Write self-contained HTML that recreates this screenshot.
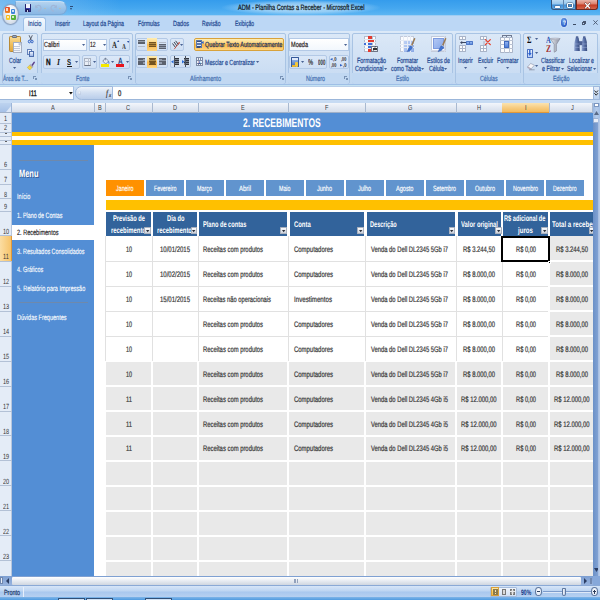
<!DOCTYPE html>
<html><head><meta charset="utf-8"><title>Excel</title>
<style>
html,body{margin:0;padding:0;}
body{width:600px;height:600px;overflow:hidden;position:relative;background:#fff;font-family:"Liberation Sans",sans-serif;}
#r{position:absolute;left:0;top:0;width:600px;height:600px;overflow:hidden;}
#r div{position:absolute;box-sizing:border-box;}
#r svg{position:absolute;overflow:visible;}
.t{position:absolute;white-space:nowrap;transform-origin:0 0;font-family:"Liberation Sans",sans-serif;text-rendering:geometricPrecision;}
</style></head><body><div id="r">
<div style="left:0px;top:0px;width:600px;height:15px;background:linear-gradient(#359cec,#45a7ef 55%,#5cb5f3);"></div>
<div style="left:0px;top:0px;width:120px;height:15px;background:linear-gradient(90deg,rgba(170,210,245,.55),rgba(170,210,245,0));"></div>
<div style="left:0px;top:14.8px;width:600px;height:16.5px;background:#bcd7f5;"></div>
<div style="left:0px;top:14.6px;width:600px;height:0.8px;background:#9fcdf3;"></div>
<div style="left:15px;top:1.2px;width:51.5px;height:13.6px;background:linear-gradient(#b4d3ef,#96c0e8 60%,#8ab7e4);border-radius:0 7px 7px 0;border:1px solid #7aa9d8;border-top-color:#c8e0f5;"></div>
<div style="left:2.3px;top:3.5px;width:16.4px;height:21.5px;background:radial-gradient(ellipse at 50% 30%,#ffffff,#e6ebf2 50%,#b4c2d6 100%);border-radius:50%;border:1px solid #8fa5c3;box-shadow:0 0 1px #6b86ad;"></div>
<div style="left:4.8px;top:6.5px;width:5px;height:6.5px;background:linear-gradient(#e8442a,#f08a1e);border-radius:1px;"></div>
<div style="left:6px;top:8.3px;width:2.3px;height:2.5px;background:#f6d7c0;"></div>
<div style="left:10.8px;top:9px;width:4.3px;height:5px;background:#3f86d8;border-radius:1px;"></div>
<div style="left:11.8px;top:10.3px;width:2px;height:2px;background:#cfe2f6;"></div>
<div style="left:5.6px;top:14.5px;width:4.8px;height:5.8px;background:linear-gradient(#f6b31c,#f7d233);border-radius:1px;"></div>
<div style="left:6.8px;top:16px;width:2.2px;height:2.4px;background:#fbeeb8;"></div>
<div style="left:11px;top:15px;width:4.6px;height:4.8px;background:#55b13a;border-radius:1px;"></div>
<div style="left:12.2px;top:16.2px;width:2px;height:2px;background:#d2edc5;"></div>
<div style="left:24.5px;top:4px;width:6.5px;height:8.3px;background:linear-gradient(#5457c8,#2e2f98);border:0.5px solid #23246e;border-radius:.5px;"></div>
<div style="left:25.8px;top:4.3px;width:3.8px;height:3.3px;background:#f1f3fb;"></div>
<div style="left:26.2px;top:9.3px;width:3px;height:3px;background:#1b1c54;"></div>
<div style="left:26.6px;top:9.8px;width:1px;height:2px;background:#c9cdea;"></div>
<svg style="left:35px;top:4px" width="7" height="8" viewBox="0 0 7 8"><path d="M1 3 C2 .8 5.5 .8 6 3.5 C6.3 5.5 4.5 7 3 7.2" fill="none" stroke="#9fb6d8" stroke-width="1.3"/><path d="M0 1 L0.3 4.5 L3.3 3.4 Z" fill="#9fb6d8"/></svg>
<svg style="left:50px;top:4px" width="7" height="8" viewBox="0 0 7 8"><path d="M6 3 C5 .8 1.5 .8 1 3.5 C.7 5.5 2.5 7 4 7.2" fill="none" stroke="#9fb6d8" stroke-width="1.3"/><path d="M7 1 L6.7 4.5 L3.7 3.4 Z" fill="#9fb6d8"/></svg>
<div style="left:44px;top:7.5px;width:0;height:0;border-left:1.3px solid transparent;border-right:1.3px solid transparent;border-top:1.8px solid #c9b98f;"></div>
<div style="left:59px;top:7.5px;width:0;height:0;border-left:1.3px solid transparent;border-right:1.3px solid transparent;border-top:1.8px solid #c9b98f;"></div>
<div style="left:70px;top:5.5px;width:3px;height:1px;background:#2b4a78;"></div>
<div style="left:70px;top:7.5px;width:0;height:0;border-left:1.5px solid transparent;border-right:1.5px solid transparent;border-top:2px solid #2b4a78;"></div>
<div style="left:222px;top:0px;width:158px;height:15px;background:radial-gradient(ellipse at 50% 50%,rgba(255,255,255,.62),rgba(255,255,255,.38) 45%,rgba(255,255,255,0) 72%);"></div>
<span class="t" style="left:238.00px;top:3.25px;line-height:9px;font-size:7.8px;color:#0a1420;transform:scaleX(0.715);-webkit-text-stroke:0.22px #0a1420;">ADM - Planilha Contas a Receber - Microsoft Excel</span>
<div style="left:550.8px;top:0px;width:13px;height:10.4px;background:linear-gradient(#b9daf3,#93c5ec 48%,#3d8dd6 52%,#62abe6);border:1px solid #35567c;border-top:0;border-radius:0 0 0 3px;"></div>
<div style="left:563.3px;top:0px;width:13px;height:10.4px;background:linear-gradient(#b9daf3,#93c5ec 48%,#3d8dd6 52%,#62abe6);border:1px solid #35567c;border-top:0;border-left-color:#5f84ad;"></div>
<div style="left:575.8px;top:0px;width:22.7px;height:10.4px;background:linear-gradient(#e9b5a9,#db7c68 48%,#c23a22 52%,#d5634a);border:1px solid #6e2a20;border-top:0;border-radius:0 0 3px 0;"></div>
<div style="left:555px;top:5.7px;width:5px;height:1.9px;background:#fff;box-shadow:0 0 0 .5px #4a6a90;border-radius:.5px;"></div>
<div style="left:567px;top:2.5px;width:5.5px;height:5.8px;background:transparent;border:1.3px solid #fff;border-radius:1px;box-shadow:0 0 0 .5px #4a5f7a, inset 0 0 0 .5px #4a5f7a;"></div>
<svg style="left:584.8px;top:2.6px" width="5.2" height="5.4" viewBox="0 0 6 6"><path d="M.6 .4 L5.4 5.6 M5.4 .4 L.6 5.6" stroke="#5b2018" stroke-width="2.3" stroke-linecap="square"/><path d="M.6 .4 L5.4 5.6 M5.4 .4 L.6 5.6" stroke="#fff" stroke-width="1.5" stroke-linecap="square"/></svg>
<div style="left:23px;top:17px;width:23px;height:15px;background:linear-gradient(#f4f9ff,#dbe9f8);border:1px solid #9dbfe6;border-bottom:0;border-radius:3px 3px 0 0;"></div>
<span class="t" style="left:27.50px;top:19.25px;line-height:9px;font-size:7.5px;color:#1b4690;transform:scaleX(0.753);-webkit-text-stroke:0.2px #1b4690;">Início</span>
<span class="t" style="left:54.50px;top:19.25px;line-height:9px;font-size:7.5px;color:#1b4690;transform:scaleX(0.720);-webkit-text-stroke:0.2px #1b4690;">Inserir</span>
<span class="t" style="left:83.00px;top:19.25px;line-height:9px;font-size:7.5px;color:#1b4690;transform:scaleX(0.702);-webkit-text-stroke:0.2px #1b4690;">Layout da Página</span>
<span class="t" style="left:138.00px;top:19.25px;line-height:9px;font-size:7.5px;color:#1b4690;transform:scaleX(0.688);-webkit-text-stroke:0.2px #1b4690;">Fórmulas</span>
<span class="t" style="left:173.00px;top:19.25px;line-height:9px;font-size:7.5px;color:#1b4690;transform:scaleX(0.738);-webkit-text-stroke:0.2px #1b4690;">Dados</span>
<span class="t" style="left:202.00px;top:19.25px;line-height:9px;font-size:7.5px;color:#1b4690;transform:scaleX(0.683);-webkit-text-stroke:0.2px #1b4690;">Revisão</span>
<span class="t" style="left:235.00px;top:19.25px;line-height:9px;font-size:7.5px;color:#1b4690;transform:scaleX(0.670);-webkit-text-stroke:0.2px #1b4690;">Exibição</span>
<div style="left:561.2px;top:18px;width:6px;height:8.6px;background:radial-gradient(ellipse at 45% 35%,#7fb1f0,#2457c4 70%);border-radius:50%;box-shadow:0 0 1.2px 0.6px #dfeaf8;"></div>
<span class="t" style="left:562.71px;top:19.25px;line-height:9px;font-size:6.5px;color:#fff;transform:scaleX(0.750);font-weight:bold;">?</span>
<div style="left:572.5px;top:23.6px;width:3.3px;height:1px;background:#3b4a63;"></div>
<div style="left:582.8px;top:20.6px;width:3.6px;height:3.8px;background:transparent;border:0.8px solid #4a5870;border-top-width:1.2px;"></div>
<div style="left:582px;top:21.6px;width:3.4px;height:3.2px;background:#bcd7f5;border:0.8px solid #4a5870;"></div>
<svg style="left:592.8px;top:20px" width="5" height="5" viewBox="0 0 5 5"><path d="M.4 .3 L4.6 4.7 M4.6 .3 L.4 4.7" stroke="#4a5870" stroke-width=".9"/></svg>
<div style="left:0px;top:31px;width:600px;height:54px;background:linear-gradient(#dce9f8,#c9ddf3 35%,#c2d8f1);"></div>
<div style="left:0px;top:83.6px;width:600px;height:1.2px;background:#9fbfe6;"></div>
<div style="left:0px;top:84.8px;width:600px;height:1.4px;background:#c4e2f2;"></div>
<div style="left:2px;top:32.5px;width:36px;height:51px;background:linear-gradient(#dbe8f7,#cfe0f4 60%,#c6daf2);border:1px solid #a9c4e4;border-radius:2px;"></div>
<div style="left:2.5px;top:73px;width:35px;height:10.5px;background:#c1d8f2;border-radius:0 0 2px 2px;"></div>
<span class="t" style="left:3.00px;top:74.25px;line-height:9px;font-size:7.5px;color:#3f6db0;transform:scaleX(0.654);-webkit-text-stroke:0.2px #3f6db0;">Área de T...</span>
<div style="left:40.5px;top:32.5px;width:92.5px;height:51px;background:linear-gradient(#dbe8f7,#cfe0f4 60%,#c6daf2);border:1px solid #a9c4e4;border-radius:2px;"></div>
<div style="left:41.0px;top:73px;width:91.5px;height:10.5px;background:#c1d8f2;border-radius:0 0 2px 2px;"></div>
<span class="t" style="left:75.50px;top:74.25px;line-height:9px;font-size:7.5px;color:#3f6db0;transform:scaleX(0.704);-webkit-text-stroke:0.2px #3f6db0;">Fonte</span>
<div style="left:135px;top:32.5px;width:150.5px;height:51px;background:linear-gradient(#dbe8f7,#cfe0f4 60%,#c6daf2);border:1px solid #a9c4e4;border-radius:2px;"></div>
<div style="left:135.5px;top:73px;width:149.5px;height:10.5px;background:#c1d8f2;border-radius:0 0 2px 2px;"></div>
<span class="t" style="left:190.00px;top:74.25px;line-height:9px;font-size:7.5px;color:#3f6db0;transform:scaleX(0.744);-webkit-text-stroke:0.2px #3f6db0;">Alinhamento</span>
<div style="left:287.5px;top:32.5px;width:62.0px;height:51px;background:linear-gradient(#dbe8f7,#cfe0f4 60%,#c6daf2);border:1px solid #a9c4e4;border-radius:2px;"></div>
<div style="left:288.0px;top:73px;width:61.0px;height:10.5px;background:#c1d8f2;border-radius:0 0 2px 2px;"></div>
<span class="t" style="left:305.50px;top:74.25px;line-height:9px;font-size:7.5px;color:#3f6db0;transform:scaleX(0.712);-webkit-text-stroke:0.2px #3f6db0;">Número</span>
<div style="left:351.5px;top:32.5px;width:101.5px;height:51px;background:linear-gradient(#dbe8f7,#cfe0f4 60%,#c6daf2);border:1px solid #a9c4e4;border-radius:2px;"></div>
<div style="left:352.0px;top:73px;width:100.5px;height:10.5px;background:#c1d8f2;border-radius:0 0 2px 2px;"></div>
<span class="t" style="left:396.00px;top:74.25px;line-height:9px;font-size:7.5px;color:#3f6db0;transform:scaleX(0.709);-webkit-text-stroke:0.2px #3f6db0;">Estilo</span>
<div style="left:455px;top:32.5px;width:66px;height:51px;background:linear-gradient(#dbe8f7,#cfe0f4 60%,#c6daf2);border:1px solid #a9c4e4;border-radius:2px;"></div>
<div style="left:455.5px;top:73px;width:65px;height:10.5px;background:#c1d8f2;border-radius:0 0 2px 2px;"></div>
<span class="t" style="left:479.50px;top:74.25px;line-height:9px;font-size:7.5px;color:#3f6db0;transform:scaleX(0.700);-webkit-text-stroke:0.2px #3f6db0;">Células</span>
<div style="left:523px;top:32.5px;width:75px;height:51px;background:linear-gradient(#dbe8f7,#cfe0f4 60%,#c6daf2);border:1px solid #a9c4e4;border-radius:2px;"></div>
<div style="left:523.5px;top:73px;width:74px;height:10.5px;background:#c1d8f2;border-radius:0 0 2px 2px;"></div>
<span class="t" style="left:552.50px;top:74.25px;line-height:9px;font-size:7.5px;color:#3f6db0;transform:scaleX(0.720);-webkit-text-stroke:0.2px #3f6db0;">Edição</span>
<div style="left:33px;top:76px;width:3px;height:3px;background:transparent;border-left:1px solid #7892b5;border-top:1px solid #7892b5;"></div>
<div style="left:35px;top:78px;width:2px;height:2px;background:#7892b5;"></div>
<div style="left:128px;top:76px;width:3px;height:3px;background:transparent;border-left:1px solid #7892b5;border-top:1px solid #7892b5;"></div>
<div style="left:130px;top:78px;width:2px;height:2px;background:#7892b5;"></div>
<div style="left:280px;top:76px;width:3px;height:3px;background:transparent;border-left:1px solid #7892b5;border-top:1px solid #7892b5;"></div>
<div style="left:282px;top:78px;width:2px;height:2px;background:#7892b5;"></div>
<div style="left:344px;top:76px;width:3px;height:3px;background:transparent;border-left:1px solid #7892b5;border-top:1px solid #7892b5;"></div>
<div style="left:346px;top:78px;width:2px;height:2px;background:#7892b5;"></div>
<div style="left:9.3px;top:36.3px;width:11.5px;height:15.3px;background:linear-gradient(#f9dc96,#eebb55 60%,#e3a93f);border:0.7px solid #b98a35;border-radius:1.2px;"></div>
<div style="left:12.3px;top:35px;width:5.2px;height:3.2px;background:linear-gradient(#c9ced8,#7f8796);border-radius:1px 1px 0 0;border:0.5px solid #6a7282;"></div>
<div style="left:12.8px;top:41.7px;width:8.8px;height:11.1px;background:linear-gradient(135deg,#ffffff,#eef1f7);border:0.7px solid #a3aec2;"></div>
<svg style="left:18.6px;top:41.7px" width="3" height="3" viewBox="0 0 3 3"><path d="M0 0 L3 3 L0 3 Z" fill="#cfd6e3" stroke="#a3aec2" stroke-width=".5"/></svg>
<div style="left:14.3px;top:46px;width:5.5px;height:0.6px;background:#c3cbd9;"></div>
<div style="left:14.3px;top:48px;width:5.5px;height:0.6px;background:#c3cbd9;"></div>
<div style="left:14.3px;top:50px;width:5.5px;height:0.6px;background:#c3cbd9;"></div>
<span class="t" style="left:9.10px;top:56.25px;line-height:9px;font-size:7.5px;color:#1b4690;transform:scaleX(0.686);-webkit-text-stroke:0.2px #1b4690;">Colar</span>
<svg style="left:13.3px;top:66.8px" width="3.2" height="2.1" viewBox="0 0 3.2 2.1"><path d="M0 0 L3.2 0 L1.6 2.1 Z" fill="#4a6394"/></svg>
<svg style="left:27.6px;top:35.3px" width="5.4" height="8.6" viewBox="0 0 6 9"><path d="M1.2 0 L3.6 5.2 M4.8 0 L2.4 5.2" stroke="#3b4250" stroke-width=".9"/><ellipse cx="1.5" cy="7" rx="1.2" ry="1.5" fill="none" stroke="#2f5fc0" stroke-width="1.1"/><ellipse cx="4.5" cy="7" rx="1.2" ry="1.5" fill="none" stroke="#2f5fc0" stroke-width="1.1"/></svg>
<div style="left:26.8px;top:48.7px;width:4.8px;height:6px;background:linear-gradient(#f6f8fd,#cfdaf0);border:0.7px solid #6683ba;"></div>
<div style="left:29.3px;top:50.6px;width:4.8px;height:6px;background:linear-gradient(#eef3fc,#9fb8e6);border:0.7px solid #4f6fae;"></div>
<svg style="left:26.6px;top:62.2px" width="8" height="8.4" viewBox="0 0 8 8.4"><path d="M5.2 3.2 L7.2 .4" stroke="#5a3f8a" stroke-width="1.5" stroke-linecap="round"/><path d="M3.6 2.4 L6.2 4.6 L5 5.6 L2.6 3.4 Z" fill="#b9b4c8" stroke="#7a7590" stroke-width=".4"/><path d="M2.6 3.4 L5 5.6 L2.8 8 L.3 5.4 Z" fill="#f2d64a" stroke="#c9a62a" stroke-width=".5"/></svg>
<div style="left:42.7px;top:38.5px;width:44.6px;height:12.4px;background:linear-gradient(#ffffff,#f2f7fd);border:0.8px solid #b3c9e6;"></div>
<span class="t" style="left:44.10px;top:40.25px;line-height:9px;font-size:7.5px;color:#2a2020;transform:scaleX(0.725);-webkit-text-stroke:0.2px #2a2020;">Calibri</span>
<div style="left:88.8px;top:38.5px;width:18.5px;height:12.4px;background:linear-gradient(#ffffff,#f2f7fd);border:0.8px solid #b3c9e6;"></div>
<span class="t" style="left:89.80px;top:40.25px;line-height:9px;font-size:7.5px;color:#2a2020;transform:scaleX(0.671);-webkit-text-stroke:0.2px #2a2020;">12</span>
<svg style="left:82.40px;top:44.00px" width="3.2" height="2.1" viewBox="0 0 3.2 2.1"><path d="M0 0 L3.2 0 L1.6 2.1 Z" fill="#4a6394"/></svg>
<svg style="left:102.70px;top:44.00px" width="3.2" height="2.1" viewBox="0 0 3.2 2.1"><path d="M0 0 L3.2 0 L1.6 2.1 Z" fill="#4a6394"/></svg>
<div style="left:109.3px;top:38.3px;width:21px;height:12.8px;background:linear-gradient(#dbe8f8,#cfdff4);border:0.8px solid #b3c9e6;border-radius:2px;"></div>
<span class="t" style="left:111.53px;top:40.25px;line-height:12px;font-size:9.5px;color:#2b2b2b;transform:scaleX(0.720);font-weight:bold;font-family:'Liberation Serif',serif;">A</span>
<span class="t" style="left:122.25px;top:42.25px;line-height:9px;font-size:7.5px;color:#2b2b2b;transform:scaleX(0.720);font-weight:bold;font-family:'Liberation Serif',serif;">A</span>
<svg style="left:116.6px;top:39.6px" width="2.4" height="2" viewBox="0 0 2.4 2"><path d="M0 2 L1.2 0 L2.4 2 Z" fill="#2c4fa4"/></svg>
<svg style="left:126.6px;top:40.8px" width="2.4" height="2" viewBox="0 0 2.4 2"><path d="M0 0 L1.2 2 L2.4 0 Z" fill="#2c4fa4"/></svg>
<div style="left:42.7px;top:55.2px;width:37px;height:13.5px;background:linear-gradient(#dbe8f8,#cfdff4);border:0.8px solid #b3c9e6;border-radius:2px;"></div>
<span class="t" style="left:46.16px;top:57.25px;line-height:10px;font-size:9px;color:#0a0a0a;transform:scaleX(0.720);font-weight:bold;-webkit-text-stroke:0.25px #0a0a0a;">N</span>
<span class="t" style="left:56.81px;top:57.25px;line-height:10px;font-size:9px;color:#1a1a1a;transform:scaleX(0.850);font-weight:bold;font-style:italic;font-family:'Liberation Serif',serif;">I</span>
<span class="t" style="left:67.46px;top:57.25px;line-height:10px;font-size:8.5px;color:#1a1a1a;transform:scaleX(0.720);font-weight:bold;">S</span>
<div style="left:67.3px;top:66px;width:4.4px;height:0.8px;background:#1a1a1a;"></div>
<svg style="left:75.00px;top:61.00px" width="3.2" height="2.1" viewBox="0 0 3.2 2.1"><path d="M0 0 L3.2 0 L1.6 2.1 Z" fill="#4a6394"/></svg>
<div style="left:81.7px;top:55.2px;width:15.6px;height:13.5px;background:linear-gradient(#dbe8f8,#cfdff4);border:0.8px solid #b3c9e6;border-radius:2px;"></div>
<div style="left:84.4px;top:58px;width:7px;height:7.6px;background:#e9eef6;border:0.7px solid #aab3c2;border-bottom:1.4px solid #6a7384;"></div>
<div style="left:87.6px;top:58px;width:0.7px;height:7px;background:#b9c1cf;"></div>
<div style="left:84.4px;top:61.3px;width:7px;height:0.7px;background:#b9c1cf;"></div>
<svg style="left:92.80px;top:61.00px" width="3.2" height="2.1" viewBox="0 0 3.2 2.1"><path d="M0 0 L3.2 0 L1.6 2.1 Z" fill="#4a6394"/></svg>
<div style="left:99.2px;top:55.2px;width:31.2px;height:13.5px;background:linear-gradient(#dbe8f8,#cfdff4);border:0.8px solid #b3c9e6;border-radius:2px;"></div>
<svg style="left:101.6px;top:56.6px" width="8" height="8" viewBox="0 0 8 8"><path d="M3.4 1 L6.6 4 L3.8 7 L.8 4.2 Z" fill="#e6ebf3" stroke="#5b6b86" stroke-width=".7"/><path d="M3.4 1 L3.4 3.4" stroke="#5b6b86" stroke-width=".7"/><path d="M6.6 4 C7.6 5 7.6 6.4 7 7 C6.2 6.4 6.2 5 6.6 4 Z" fill="#3a6fd0"/></svg>
<div style="left:101px;top:64.3px;width:8.3px;height:2.3px;background:#f5e800;"></div>
<svg style="left:110.70px;top:61.00px" width="3.2" height="2.1" viewBox="0 0 3.2 2.1"><path d="M0 0 L3.2 0 L1.6 2.1 Z" fill="#4a6394"/></svg>
<span class="t" style="left:117.96px;top:56.25px;line-height:10px;font-size:9px;color:#2b4a86;transform:scaleX(0.720);font-weight:bold;">A</span>
<div style="left:116.3px;top:64.3px;width:7.6px;height:2.3px;background:#e8141c;"></div>
<svg style="left:126.00px;top:61.00px" width="3.2" height="2.1" viewBox="0 0 3.2 2.1"><path d="M0 0 L3.2 0 L1.6 2.1 Z" fill="#4a6394"/></svg>
<div style="left:135.6px;top:37.8px;width:32px;height:13.5px;background:linear-gradient(#dbe8f8,#cfdff4);border:0.8px solid #b3c9e6;border-radius:2px;"></div>
<div style="left:146.9px;top:38.2px;width:10.5px;height:12.7px;background:linear-gradient(#ffeeb4,#fdd27a 40%,#f8b548 52%,#fdd581);"></div>
<div style="left:138px;top:40.3px;width:7px;height:4.2px;background:#5b616d;opacity:.55;"></div>
<div style="left:138px;top:40.3px;width:7px;height:1.1px;background:#5b616d;"></div>
<div style="left:138px;top:41.849999999999994px;width:7px;height:1.1px;background:#5b616d;"></div>
<div style="left:138px;top:43.4px;width:7px;height:1.1px;background:#5b616d;"></div>
<div style="left:138px;top:45.6px;width:7px;height:0.6px;background:#b4bcc9;"></div>
<div style="left:148.5px;top:41.5px;width:7.4px;height:5.4px;background:#73531f;opacity:.55;"></div>
<div style="left:148.5px;top:41.5px;width:7.4px;height:1.1px;background:#73531f;"></div>
<div style="left:148.5px;top:43.65px;width:7.4px;height:1.1px;background:#73531f;"></div>
<div style="left:148.5px;top:45.8px;width:7.4px;height:1.1px;background:#73531f;"></div>
<div style="left:159.3px;top:43.8px;width:7px;height:4.8px;background:#5b616d;opacity:.55;"></div>
<div style="left:159.3px;top:43.8px;width:7px;height:1.1px;background:#5b616d;"></div>
<div style="left:159.3px;top:45.65px;width:7px;height:1.1px;background:#5b616d;"></div>
<div style="left:159.3px;top:47.5px;width:7px;height:1.1px;background:#5b616d;"></div>
<div style="left:159.3px;top:42.4px;width:7px;height:0.6px;background:#b4bcc9;"></div>
<div style="left:169.7px;top:37.8px;width:14.8px;height:13.5px;background:linear-gradient(#dbe8f8,#cfdff4);border:0.8px solid #b3c9e6;border-radius:2px;"></div>
<svg style="left:171.5px;top:39.5px" width="8" height="10" viewBox="0 0 8 10"><g stroke="#3d4350" stroke-width="1" fill="none"><path d="M.5 3.5 L3.5 7.5 M2 2 L5 6 M3.6 .8 L6.4 4.6"/></g><path d="M2.2 9.2 L7.4 2.6" stroke="#c2402f" stroke-width=".8"/><path d="M7.8 1.8 L7.3 4 L5.9 2.9 Z" fill="#c2402f"/></svg>
<svg style="left:179.70px;top:43.50px" width="3.2" height="2.1" viewBox="0 0 3.2 2.1"><path d="M0 0 L3.2 0 L1.6 2.1 Z" fill="#4a6394"/></svg>
<div style="left:135.6px;top:55.3px;width:32px;height:13.2px;background:linear-gradient(#dbe8f8,#cfdff4);border:0.8px solid #b3c9e6;border-radius:2px;"></div>
<div style="left:146.9px;top:55.7px;width:10.5px;height:12.4px;background:linear-gradient(#ffeeb4,#fdd27a 40%,#f8b548 52%,#fdd581);"></div>
<div style="left:138px;top:57.6px;width:7px;height:7.6px;background:#5b616d;opacity:.55;"></div>
<div style="left:138px;top:57.6px;width:7px;height:1.1px;background:#5b616d;"></div>
<div style="left:138px;top:59.225px;width:4.760000000000001px;height:1.1px;background:#5b616d;"></div>
<div style="left:138px;top:60.85px;width:7px;height:1.1px;background:#5b616d;"></div>
<div style="left:138px;top:62.475px;width:4.760000000000001px;height:1.1px;background:#5b616d;"></div>
<div style="left:138px;top:64.1px;width:7px;height:1.1px;background:#5b616d;"></div>
<div style="left:148.5px;top:57.6px;width:7.4px;height:7.6px;background:#73531f;opacity:.55;"></div>
<div style="left:148.5px;top:57.6px;width:7.4px;height:1.1px;background:#73531f;"></div>
<div style="left:149.684px;top:59.225px;width:5.032000000000001px;height:1.1px;background:#73531f;"></div>
<div style="left:148.5px;top:60.85px;width:7.4px;height:1.1px;background:#73531f;"></div>
<div style="left:149.684px;top:62.475px;width:5.032000000000001px;height:1.1px;background:#73531f;"></div>
<div style="left:148.5px;top:64.1px;width:7.4px;height:1.1px;background:#73531f;"></div>
<div style="left:159.3px;top:57.6px;width:7px;height:7.6px;background:#5b616d;opacity:.55;"></div>
<div style="left:159.3px;top:57.6px;width:7px;height:1.1px;background:#5b616d;"></div>
<div style="left:161.54000000000002px;top:59.225px;width:4.760000000000001px;height:1.1px;background:#5b616d;"></div>
<div style="left:159.3px;top:60.85px;width:7px;height:1.1px;background:#5b616d;"></div>
<div style="left:161.54000000000002px;top:62.475px;width:4.760000000000001px;height:1.1px;background:#5b616d;"></div>
<div style="left:159.3px;top:64.1px;width:7px;height:1.1px;background:#5b616d;"></div>
<div style="left:169.7px;top:55.3px;width:21px;height:13.2px;background:linear-gradient(#dbe8f8,#cfdff4);border:0.8px solid #b3c9e6;border-radius:2px;"></div>
<div style="left:173.8px;top:58.2px;width:4.8px;height:6.6px;background:#2e333d;opacity:.55;"></div>
<div style="left:173.8px;top:58.2px;width:4.8px;height:1.1px;background:#2e333d;"></div>
<div style="left:175.336px;top:60.03333333333334px;width:3.2640000000000002px;height:1.1px;background:#2e333d;"></div>
<div style="left:173.8px;top:61.86666666666667px;width:4.8px;height:1.1px;background:#2e333d;"></div>
<div style="left:175.336px;top:63.7px;width:3.2640000000000002px;height:1.1px;background:#2e333d;"></div>
<div style="left:174.0px;top:56.400000000000006px;width:0.8px;height:10.4px;background:#4a505c;"></div>
<svg style="left:171.0px;top:59.800000000000004px" width="2.6" height="3.4" viewBox="0 0 2.6 3.4"><path d="M0 1.7 L2.6 0 L2.6 3.4 Z" fill="#2f6fd6"/></svg>
<div style="left:184.4px;top:58.2px;width:4.8px;height:6.6px;background:#2e333d;opacity:.55;"></div>
<div style="left:184.4px;top:58.2px;width:4.8px;height:1.1px;background:#2e333d;"></div>
<div style="left:185.936px;top:60.03333333333334px;width:3.2640000000000002px;height:1.1px;background:#2e333d;"></div>
<div style="left:184.4px;top:61.86666666666667px;width:4.8px;height:1.1px;background:#2e333d;"></div>
<div style="left:185.936px;top:63.7px;width:3.2640000000000002px;height:1.1px;background:#2e333d;"></div>
<div style="left:184.6px;top:56.400000000000006px;width:0.8px;height:10.4px;background:#4a505c;"></div>
<svg style="left:181.6px;top:59.800000000000004px" width="2.6" height="3.4" viewBox="0 0 2.6 3.4"><path d="M2.6 1.7 L0 0 L0 3.4 Z" fill="#2f6fd6"/></svg>
<div style="left:194px;top:37.8px;width:90px;height:13.2px;background:linear-gradient(#ffeeb4,#fdd27a 40%,#f8b548 52%,#fdd581);border:0.8px solid #d8a23c;border-radius:2px;"></div>
<div style="left:196px;top:39.8px;width:6.3px;height:3.8px;background:#e4ecf8;border:0.7px solid #5b79b0;"></div>
<div style="left:196px;top:44.4px;width:6.3px;height:4px;background:#e4ecf8;border:0.7px solid #5b79b0;"></div>
<div style="left:197px;top:41.4px;width:3.5px;height:0.7px;background:#3b4e78;"></div>
<div style="left:197px;top:46px;width:4px;height:0.7px;background:#3b4e78;"></div>
<div style="left:197px;top:47.2px;width:2.6px;height:0.7px;background:#3b4e78;"></div>
<svg style="left:200.6px;top:40.6px" width="2.6" height="3" viewBox="0 0 2.6 3"><path d="M0 1.5 L2.6 0 L2.6 3 Z" fill="#2c5fc4"/></svg>
<span class="t" style="left:204.90px;top:40.25px;line-height:9px;font-size:7.5px;color:#16305f;transform:scaleX(0.720);-webkit-text-stroke:0.2px #16305f;">Quebrar Texto Automaticamente</span>
<div style="left:196px;top:57.3px;width:6.6px;height:8.8px;background:#eef2f9;border:0.7px solid #7b8aa6;"></div>
<div style="left:196px;top:59.8px;width:6.6px;height:0.6px;background:#7b8aa6;"></div>
<div style="left:196px;top:63.2px;width:6.6px;height:0.6px;background:#7b8aa6;"></div>
<div style="left:198px;top:57.3px;width:0.6px;height:2.5px;background:#7b8aa6;"></div>
<div style="left:200.3px;top:57.3px;width:0.6px;height:2.5px;background:#7b8aa6;"></div>
<div style="left:198px;top:63.8px;width:0.6px;height:2.3px;background:#7b8aa6;"></div>
<div style="left:200.3px;top:63.8px;width:0.6px;height:2.3px;background:#7b8aa6;"></div>
<span class="t" style="left:198.19px;top:59.25px;line-height:8px;font-size:5px;color:#1d3f8a;transform:scaleX(0.800);font-weight:bold;">a</span>
<span class="t" style="left:204.60px;top:58.25px;line-height:9px;font-size:7.5px;color:#1b4690;transform:scaleX(0.703);-webkit-text-stroke:0.2px #1b4690;">Mesclar e Centralizar</span>
<svg style="left:256.00px;top:61.20px" width="3.2" height="2.1" viewBox="0 0 3.2 2.1"><path d="M0 0 L3.2 0 L1.6 2.1 Z" fill="#4a6394"/></svg>
<div style="left:289.4px;top:38.3px;width:59.6px;height:12.6px;background:linear-gradient(#ffffff,#f2f7fd);border:0.8px solid #b3c9e6;"></div>
<span class="t" style="left:290.80px;top:40.25px;line-height:9px;font-size:7.5px;color:#2a2020;transform:scaleX(0.741);-webkit-text-stroke:0.2px #2a2020;">Moeda</span>
<svg style="left:344.20px;top:43.80px" width="3.2" height="2.1" viewBox="0 0 3.2 2.1"><path d="M0 0 L3.2 0 L1.6 2.1 Z" fill="#4a6394"/></svg>
<div style="left:289.4px;top:55.2px;width:37.6px;height:13.5px;background:linear-gradient(#dbe8f8,#cfdff4);border:0.8px solid #b3c9e6;border-radius:2px;"></div>
<div style="left:291px;top:57px;width:8px;height:10px;background:linear-gradient(#a9c4ee,#3f6fc0);border:0.6px solid #35599a;border-radius:.5px;"></div>
<div style="left:292px;top:58.2px;width:6px;height:2px;background:#dfe9fa;"></div>
<div style="left:294.6px;top:62.4px;width:3.6px;height:4.2px;background:#f3c63c;border-radius:1px;"></div>
<div style="left:292.2px;top:65px;width:3px;height:1.6px;background:#e9b52c;"></div>
<svg style="left:300.80px;top:61.00px" width="3.2" height="2.1" viewBox="0 0 3.2 2.1"><path d="M0 0 L3.2 0 L1.6 2.1 Z" fill="#4a6394"/></svg>
<span class="t" style="left:308.33px;top:57.25px;line-height:10px;font-size:8.5px;color:#2b2b2b;transform:scaleX(0.680);font-weight:bold;">%</span>
<span class="t" style="left:317.93px;top:58.25px;line-height:9px;font-size:8px;color:#2b2b2b;transform:scaleX(0.550);font-weight:bold;">000</span>
<div style="left:328.5px;top:55.2px;width:20.5px;height:13.5px;background:linear-gradient(#dbe8f8,#cfdff4);border:0.8px solid #b3c9e6;border-radius:2px;"></div>
<span class="t" style="left:332.88px;top:56.25px;line-height:8px;font-size:5.5px;color:#222;transform:scaleX(0.750);font-weight:bold;">,0</span>
<span class="t" style="left:331.32px;top:62.25px;line-height:8px;font-size:5.5px;color:#222;transform:scaleX(0.700);font-weight:bold;">,00</span>
<span class="t" style="left:341.32px;top:56.25px;line-height:8px;font-size:5.5px;color:#222;transform:scaleX(0.700);font-weight:bold;">,00</span>
<span class="t" style="left:343.28px;top:62.25px;line-height:8px;font-size:5.5px;color:#222;transform:scaleX(0.750);font-weight:bold;">,0</span>
<svg style="left:330.3px;top:57.6px" width="2.6" height="2.4" viewBox="0 0 2.6 2.4"><path d="M0 1.2 L2.6 0 L2.6 2.4 Z" fill="#2c5fc4"/></svg>
<svg style="left:339.8px;top:63.6px" width="2.6" height="2.4" viewBox="0 0 2.6 2.4"><path d="M2.6 1.2 L0 0 L0 2.4 Z" fill="#2c5fc4"/></svg>
<div style="left:364.2px;top:35.6px;width:11.4px;height:16px;background:#fbfcfe;border:0.6px solid #b3bccd;"></div>
<div style="left:364.2px;top:38.50000000000001px;width:11.4px;height:0.6px;background:#b3bccd;"></div>
<div style="left:364.2px;top:41.7px;width:11.4px;height:0.6px;background:#b3bccd;"></div>
<div style="left:364.2px;top:44.900000000000006px;width:11.4px;height:0.6px;background:#b3bccd;"></div>
<div style="left:364.2px;top:48.10000000000001px;width:11.4px;height:0.6px;background:#b3bccd;"></div>
<div style="left:367.7px;top:35.6px;width:0.6px;height:16px;background:#b3bccd;"></div>
<div style="left:371.5px;top:35.6px;width:0.6px;height:16px;background:#b3bccd;"></div>
<div style="left:368.0px;top:35.6px;width:3.8000000000000003px;height:6.08px;background:#e23b30;"></div>
<div style="left:368.0px;top:42.0px;width:3.8000000000000003px;height:6.4px;background:#3f6fd8;"></div>
<div style="left:368.0px;top:48.400000000000006px;width:3.8000000000000003px;height:3.2px;background:#e23b30;"></div>
<div style="left:364.2px;top:42.0px;width:2.2800000000000002px;height:3.2px;background:#3f6fd8;"></div>
<div style="left:371.8px;top:38.800000000000004px;width:1.9000000000000001px;height:3.2px;background:#e23b30;"></div>
<div style="left:364.2px;top:38.50000000000001px;width:11.4px;height:0.6px;background:#dfe4ee;"></div>
<div style="left:364.2px;top:41.7px;width:11.4px;height:0.6px;background:#dfe4ee;"></div>
<div style="left:364.2px;top:44.900000000000006px;width:11.4px;height:0.6px;background:#dfe4ee;"></div>
<div style="left:364.2px;top:48.10000000000001px;width:11.4px;height:0.6px;background:#dfe4ee;"></div>
<div style="left:371.2px;top:45.6px;width:7.2px;height:6.6px;background:linear-gradient(#fdfdfe,#dfe3ea);border:0.6px solid #6d7788;border-radius:.6px;"></div>
<div style="left:373px;top:47.6px;width:3.6px;height:0.7px;background:#333;"></div>
<div style="left:373px;top:49.4px;width:3.6px;height:0.7px;background:#333;"></div>
<svg style="left:373.4px;top:46.4px" width="3" height="5" viewBox="0 0 3 5"><path d="M2.6 .2 L.4 4.8" stroke="#333" stroke-width=".6"/></svg>
<span class="t" style="left:357.00px;top:56.25px;line-height:9px;font-size:7.5px;color:#1b4690;transform:scaleX(0.725);-webkit-text-stroke:0.2px #1b4690;">Formatação</span>
<span class="t" style="left:355.00px;top:64.25px;line-height:9px;font-size:7.5px;color:#1b4690;transform:scaleX(0.727);-webkit-text-stroke:0.2px #1b4690;">Condicional</span>
<svg style="left:384.40px;top:67.60px" width="3.2" height="2.1" viewBox="0 0 3.2 2.1"><path d="M0 0 L3.2 0 L1.6 2.1 Z" fill="#4a6394"/></svg>
<div style="left:400px;top:36px;width:13.6px;height:15.6px;background:#fbfcfe;border:0.6px solid #c3cbdb;"></div>
<div style="left:400px;top:39.6px;width:13.6px;height:0.6px;background:#c3cbdb;"></div>
<div style="left:400px;top:43.5px;width:13.6px;height:0.6px;background:#c3cbdb;"></div>
<div style="left:400px;top:47.400000000000006px;width:13.6px;height:0.6px;background:#c3cbdb;"></div>
<div style="left:403.09999999999997px;top:36px;width:0.6px;height:15.6px;background:#c3cbdb;"></div>
<div style="left:406.5px;top:36px;width:0.6px;height:15.6px;background:#c3cbdb;"></div>
<div style="left:409.9px;top:36px;width:0.6px;height:15.6px;background:#c3cbdb;"></div>
<div style="left:403.4px;top:39.9px;width:10.2px;height:11.7px;background:linear-gradient(135deg,#b7cbf3,#7fa2e6);opacity:.85;"></div>
<div style="left:400px;top:39.6px;width:13.6px;height:0.6px;background:#e6ebf5;"></div>
<div style="left:403.09999999999997px;top:36px;width:0.6px;height:15.6px;background:#e6ebf5;"></div>
<div style="left:400px;top:43.5px;width:13.6px;height:0.6px;background:#e6ebf5;"></div>
<div style="left:406.5px;top:36px;width:0.6px;height:15.6px;background:#e6ebf5;"></div>
<div style="left:400px;top:47.400000000000006px;width:13.6px;height:0.6px;background:#e6ebf5;"></div>
<div style="left:409.9px;top:36px;width:0.6px;height:15.6px;background:#e6ebf5;"></div>
<svg style="left:405.6px;top:37.6px" width="10" height="15" viewBox="0 0 10 15"><path d="M8.6 .8 L5.2 8.6" stroke="#9a7a52" stroke-width="1.5" stroke-linecap="round"/><path d="M5.8 7.4 L3.8 8.2 L1 13.8 L4.4 12.4 L6.6 9.2 Z" fill="#3f74d4" stroke="#2a4f9a" stroke-width=".4"/><path d="M4.6 7.2 L6.8 8.4" stroke="#c9ced8" stroke-width="1"/></svg>
<span class="t" style="left:397.00px;top:56.25px;line-height:9px;font-size:7.5px;color:#1b4690;transform:scaleX(0.690);-webkit-text-stroke:0.2px #1b4690;">Formatar</span>
<span class="t" style="left:391.00px;top:64.25px;line-height:9px;font-size:7.5px;color:#1b4690;transform:scaleX(0.708);-webkit-text-stroke:0.2px #1b4690;">como Tabela</span>
<svg style="left:421.40px;top:67.60px" width="3.2" height="2.1" viewBox="0 0 3.2 2.1"><path d="M0 0 L3.2 0 L1.6 2.1 Z" fill="#4a6394"/></svg>
<div style="left:431.3px;top:36px;width:14.4px;height:15.6px;background:#fbfcfe;border:0.6px solid #c3cbdb;"></div>
<div style="left:433.2px;top:37.6px;width:10.4px;height:11.2px;background:linear-gradient(135deg,#b3c8f4,#86a7ea);border:0.6px solid #7d9be0;"></div>
<div style="left:431.3px;top:50px;width:14.4px;height:0.6px;background:#d5dbe8;"></div>
<div style="left:444.3px;top:36px;width:0.6px;height:15.6px;background:#d5dbe8;"></div>
<svg style="left:437.2px;top:37.6px" width="10" height="15" viewBox="0 0 10 15"><path d="M8.6 .8 L5.2 8.6" stroke="#9a7a52" stroke-width="1.5" stroke-linecap="round"/><path d="M5.8 7.4 L3.8 8.2 L1 13.8 L4.4 12.4 L6.6 9.2 Z" fill="#3f74d4" stroke="#2a4f9a" stroke-width=".4"/><path d="M4.6 7.2 L6.8 8.4" stroke="#c9ced8" stroke-width="1"/></svg>
<span class="t" style="left:427.00px;top:56.25px;line-height:9px;font-size:7.5px;color:#1b4690;transform:scaleX(0.707);-webkit-text-stroke:0.2px #1b4690;">Estilos de</span>
<span class="t" style="left:429.00px;top:64.25px;line-height:9px;font-size:7.5px;color:#1b4690;transform:scaleX(0.706);-webkit-text-stroke:0.2px #1b4690;">Célula</span>
<svg style="left:444.40px;top:67.60px" width="3.2" height="2.1" viewBox="0 0 3.2 2.1"><path d="M0 0 L3.2 0 L1.6 2.1 Z" fill="#4a6394"/></svg>
<div style="left:458.8px;top:36.2px;width:6.9px;height:3.8px;background:#fbfcfe;border:0.7px solid #a9b4c8;border-radius:.6px;"></div>
<div style="left:461.95px;top:36.2px;width:0.6px;height:3.8px;background:#a9b4c8;"></div>
<div style="left:458.8px;top:45.4px;width:6.9px;height:6.2px;background:#fbfcfe;border:0.7px solid #a9b4c8;border-radius:.6px;"></div>
<div style="left:461.95px;top:45.4px;width:0.6px;height:6.2px;background:#a9b4c8;"></div>
<div style="left:458.8px;top:48.2px;width:6.9px;height:0.6px;background:#a9b4c8;"></div>
<div style="left:466.2px;top:40.6px;width:6.9px;height:4.2px;background:linear-gradient(#9cbcf0,#5e8ee0);border:0.7px solid #4f79c8;border-radius:.6px;"></div>
<div style="left:469.34999999999997px;top:40.6px;width:0.6px;height:4.2px;background:#4f79c8;"></div>
<div style="left:461.4px;top:42.4px;width:4.2px;height:0.8px;background:#3b4660;"></div>
<svg style="left:460.2px;top:41.2px" width="2.2" height="3.2" viewBox="0 0 2.2 3.2"><path d="M0 1.6 L2.2 0 L2.2 3.2 Z" fill="#3b4660"/></svg>
<span class="t" style="left:458.20px;top:56.25px;line-height:9px;font-size:7.5px;color:#1b4690;transform:scaleX(0.710);-webkit-text-stroke:0.2px #1b4690;">Inserir</span>
<svg style="left:464.00px;top:66.80px" width="3.2" height="2.1" viewBox="0 0 3.2 2.1"><path d="M0 0 L3.2 0 L1.6 2.1 Z" fill="#4a6394"/></svg>
<div style="left:479.8px;top:36.2px;width:6.9px;height:3.8px;background:#fbfcfe;border:0.7px solid #a9b4c8;border-radius:.6px;"></div>
<div style="left:482.95px;top:36.2px;width:0.6px;height:3.8px;background:#a9b4c8;"></div>
<div style="left:479.8px;top:45.4px;width:6.9px;height:6.2px;background:#fbfcfe;border:0.7px solid #a9b4c8;border-radius:.6px;"></div>
<div style="left:482.95px;top:45.4px;width:0.6px;height:6.2px;background:#a9b4c8;"></div>
<div style="left:479.8px;top:48.2px;width:6.9px;height:0.6px;background:#a9b4c8;"></div>
<div style="left:482.8px;top:40.6px;width:3.9px;height:4px;background:#e3e8f2;border:0.7px solid #c3cbdb;border-radius:.6px;"></div>
<div style="left:484.45px;top:40.6px;width:0.6px;height:4px;background:#c3cbdb;"></div>
<svg style="left:485.2px;top:39.4px" width="5.8" height="6.2" viewBox="0 0 5.8 6.2"><path d="M.5 .6 L5.3 5.6 M5.3 .6 L.5 5.6" stroke="#e8402a" stroke-width="1.3" stroke-linecap="round"/></svg>
<span class="t" style="left:478.20px;top:56.25px;line-height:9px;font-size:7.5px;color:#1b4690;transform:scaleX(0.675);-webkit-text-stroke:0.2px #1b4690;">Excluir</span>
<svg style="left:484.00px;top:66.80px" width="3.2" height="2.1" viewBox="0 0 3.2 2.1"><path d="M0 0 L3.2 0 L1.6 2.1 Z" fill="#4a6394"/></svg>
<div style="left:500.4px;top:36.6px;width:12.8px;height:16px;background:#fbfcfe;border:0.7px solid #a9b4c8;border-radius:.8px;"></div>
<div style="left:503.8px;top:36.6px;width:0.6px;height:16px;background:#b9c2d3;"></div>
<div style="left:508.6px;top:36.6px;width:0.6px;height:16px;background:#b9c2d3;"></div>
<div style="left:500.4px;top:40.4px;width:12.8px;height:0.6px;background:#b9c2d3;"></div>
<div style="left:500.4px;top:44.2px;width:12.8px;height:0.6px;background:#b9c2d3;"></div>
<div style="left:500.4px;top:48px;width:12.8px;height:0.6px;background:#b9c2d3;"></div>
<div style="left:504.4px;top:40.8px;width:4.2px;height:7.4px;background:linear-gradient(#8fb0ee,#4f7fdc);border:0.5px solid #3f69be;"></div>
<div style="left:501.8px;top:35.2px;width:10px;height:0.8px;background:#6d7890;"></div>
<div style="left:501.8px;top:34.8px;width:0.7px;height:1.8px;background:#6d7890;"></div>
<div style="left:511.1px;top:34.8px;width:0.7px;height:1.8px;background:#6d7890;"></div>
<div style="left:506.2px;top:34.6px;width:0.8px;height:2px;background:#6d7890;"></div>
<span class="t" style="left:497.00px;top:56.25px;line-height:9px;font-size:7.5px;color:#1b4690;transform:scaleX(0.704);-webkit-text-stroke:0.2px #1b4690;">Formatar</span>
<svg style="left:505.90px;top:66.80px" width="3.2" height="2.1" viewBox="0 0 3.2 2.1"><path d="M0 0 L3.2 0 L1.6 2.1 Z" fill="#4a6394"/></svg>
<span class="t" style="left:527.36px;top:35.25px;line-height:12px;font-size:9.5px;color:#0a0a0a;transform:scaleX(0.720);font-weight:bold;font-family:'Liberation Serif',serif;">Σ</span>
<svg style="left:535.00px;top:38.40px" width="3.2" height="2.1" viewBox="0 0 3.2 2.1"><path d="M0 0 L3.2 0 L1.6 2.1 Z" fill="#4a6394"/></svg>
<div style="left:527px;top:48.8px;width:6.2px;height:8.8px;background:linear-gradient(#f1f6fe,#b9cff5);border:0.8px solid #4a6fbf;border-radius:.6px;"></div>
<svg style="left:528.3px;top:50.2px" width="3.6" height="6" viewBox="0 0 3.6 6"><path d="M1.1 0 L2.5 0 L2.5 3 L3.6 3 L1.8 6 L0 3 L1.1 3 Z" fill="#2a62d0"/></svg>
<svg style="left:535.00px;top:52.00px" width="3.2" height="2.1" viewBox="0 0 3.2 2.1"><path d="M0 0 L3.2 0 L1.6 2.1 Z" fill="#4a6394"/></svg>
<svg style="left:526.6px;top:62.6px" width="8" height="7" viewBox="0 0 8 7"><path d="M3.6 .4 L7.4 2.2 L4.2 5.8 L.6 4 Z" fill="#f6f6fa" stroke="#8e96a8" stroke-width=".6"/><path d="M.6 4 L4.2 5.8 L4.2 6.6 L.6 4.8 Z" fill="#e9b3bf" stroke="#8e96a8" stroke-width=".4"/><path d="M2 6.8 L7.6 6.8" stroke="#6c7385" stroke-width=".6"/></svg>
<svg style="left:535.00px;top:65.00px" width="3.2" height="2.1" viewBox="0 0 3.2 2.1"><path d="M0 0 L3.2 0 L1.6 2.1 Z" fill="#4a6394"/></svg>
<span class="t" style="left:546.13px;top:35.25px;line-height:12px;font-size:9.5px;color:#2f56b5;transform:scaleX(0.720);font-weight:bold;font-family:'Liberation Serif',serif;">A</span>
<span class="t" style="left:546.28px;top:43.25px;line-height:13px;font-size:10.5px;color:#a32f2a;transform:scaleX(0.720);font-weight:bold;font-family:'Liberation Serif',serif;">Z</span>
<svg style="left:550px;top:37.6px" width="10.4" height="14.6" viewBox="0 0 10.4 14.6"><defs><linearGradient id="fg" x1="0" x2="1"><stop offset="0" stop-color="#f3f4f7"/><stop offset=".5" stop-color="#b9bdc8"/><stop offset="1" stop-color="#8d93a2"/></linearGradient></defs><path d="M.3 .6 L10.1 .6 L6.4 6.4 L6.4 13 L4.2 14.2 L4.2 6.4 Z" fill="url(#fg)" stroke="#7b8294" stroke-width=".6"/><ellipse cx="5.2" cy=".9" rx="4.8" ry=".8" fill="#d9dce4" stroke="#7b8294" stroke-width=".4"/></svg>
<span class="t" style="left:541.05px;top:56.25px;line-height:9px;font-size:7.5px;color:#1b4690;transform:scaleX(0.685);-webkit-text-stroke:0.2px #1b4690;">Classificar</span>
<span class="t" style="left:542.00px;top:64.25px;line-height:9px;font-size:7.5px;color:#1b4690;transform:scaleX(0.708);-webkit-text-stroke:0.2px #1b4690;">e Filtrar</span>
<svg style="left:561.00px;top:67.60px" width="3.2" height="2.1" viewBox="0 0 3.2 2.1"><path d="M0 0 L3.2 0 L1.6 2.1 Z" fill="#4a6394"/></svg>
<svg style="left:574px;top:36px" width="13.4" height="15.4" viewBox="0 0 13.4 15.4"><defs><linearGradient id="bg1" x1="0" x2="1"><stop offset="0" stop-color="#8ea3cf"/><stop offset=".45" stop-color="#5a72a8"/><stop offset="1" stop-color="#34487a"/></linearGradient></defs><path d="M1.6 2 L4.6 2 L5.4 6 L5.8 15 L.2 15 L.6 6 Z" fill="url(#bg1)"/><path d="M8.8 2 L11.8 2 L12.8 6 L13.2 15 L7.6 15 L8 6 Z" fill="url(#bg1)"/><rect x="1.8" y=".3" width="2.6" height="2.2" rx=".6" fill="#51669a"/><rect x="9" y=".3" width="2.6" height="2.2" rx=".6" fill="#51669a"/><rect x="5" y="5.2" width="3.4" height="4" fill="#4a5f92"/><path d="M.3 11.4 L5.7 11.4 M7.7 11.4 L13.1 11.4 M.5 8 L5.5 8 M7.9 8 L12.9 8" stroke="#9fb2da" stroke-width=".5"/></svg>
<span class="t" style="left:568.75px;top:56.25px;line-height:9px;font-size:7.5px;color:#1b4690;transform:scaleX(0.687);-webkit-text-stroke:0.2px #1b4690;">Localizar e</span>
<span class="t" style="left:567.00px;top:64.25px;line-height:9px;font-size:7.5px;color:#1b4690;transform:scaleX(0.705);-webkit-text-stroke:0.2px #1b4690;">Selecionar</span>
<svg style="left:592.80px;top:67.60px" width="3.2" height="2.1" viewBox="0 0 3.2 2.1"><path d="M0 0 L3.2 0 L1.6 2.1 Z" fill="#4a6394"/></svg>
<div style="left:0px;top:86px;width:600px;height:17px;background:#c7dbf3;"></div>
<div style="left:0px;top:86.4px;width:73.8px;height:13.2px;background:#fff;border-right:0.8px solid #a5c0e2;border-bottom:0.8px solid #9bb6da;border-top:0.6px solid #b9cfea;"></div>
<span class="t" style="left:29.10px;top:89.25px;line-height:9px;font-size:8.2px;color:#111;transform:scaleX(0.723);-webkit-text-stroke:0.3px #111;">I11</span>
<svg style="left:68.6px;top:92.2px" width="3.8" height="2.6" viewBox="0 0 3.8 2.6"><path d="M0 0 L3.8 0 L1.9 2.6 Z" fill="#111"/></svg>
<div style="left:74.8px;top:86.4px;width:38.4px;height:13.2px;background:linear-gradient(#f1f5fb,#d3e0f2 45%,#b9cdea);border:0.8px solid #9fb9dd;border-radius:6.5px 0 0 6.5px;"></div>
<div style="left:77.8px;top:90.6px;width:3.2px;height:4.4px;background:radial-gradient(ellipse at 40% 35%,#f4f7fc,#9fb2d2);border-radius:50%;"></div>
<span class="t" style="left:106.00px;top:88.25px;line-height:10px;font-size:9px;color:#333;transform:scaleX(0.800);font-style:italic;font-family:'Liberation Serif',serif;-webkit-text-stroke:0.15px #333;">f</span>
<span class="t" style="left:108.73px;top:92.25px;line-height:8px;font-size:6px;color:#333;transform:scaleX(0.800);font-style:italic;font-family:'Liberation Serif',serif;-webkit-text-stroke:0.15px #333;">x</span>
<div style="left:113.2px;top:86.4px;width:479.6px;height:13.2px;background:#fff;border-top:0.6px solid #b9cfea;border-bottom:0.8px solid #9bb6da;"></div>
<span class="t" style="left:118.00px;top:89.25px;line-height:9px;font-size:8.2px;color:#111;transform:scaleX(0.724);-webkit-text-stroke:0.25px #111;">0</span>
<div style="left:592.8px;top:86.4px;width:7.2px;height:13.2px;background:linear-gradient(#e6eef9,#bcd2ee);border:0.8px solid #9fb9dd;"></div>
<svg style="left:594.2px;top:90px" width="4.4" height="6" viewBox="0 0 4.4 6"><path d="M.4 .5 L2.2 2.5 L4 .5 M.4 3.2 L2.2 5.2 L4 3.2" fill="none" stroke="#222" stroke-width="1"/></svg>
<div style="left:0px;top:99.7px;width:600px;height:3.3px;background:#c7dbf3;"></div>
<div style="left:0px;top:103px;width:592.5px;height:9.5px;background:linear-gradient(#f3f6fb,#e3e9f3 50%,#d5deeb);border-bottom:0.8px solid #9fb0c8;"></div>
<div style="left:93.5px;top:103px;width:1px;height:9.5px;background:#a9b9d0;"></div>
<span class="t" style="left:51.13px;top:103.25px;line-height:9px;font-size:7.2px;color:#3a3a3a;transform:scaleX(0.780);">A</span>
<div style="left:104.5px;top:103px;width:1px;height:9.5px;background:#a9b9d0;"></div>
<span class="t" style="left:97.63px;top:103.25px;line-height:9px;font-size:7.2px;color:#3a3a3a;transform:scaleX(0.780);">B</span>
<div style="left:151.5px;top:103px;width:1px;height:9.5px;background:#a9b9d0;"></div>
<span class="t" style="left:126.47px;top:103.25px;line-height:9px;font-size:7.2px;color:#3a3a3a;transform:scaleX(0.780);">C</span>
<div style="left:197.5px;top:103px;width:1px;height:9.5px;background:#a9b9d0;"></div>
<span class="t" style="left:172.97px;top:103.25px;line-height:9px;font-size:7.2px;color:#3a3a3a;transform:scaleX(0.780);">D</span>
<div style="left:287.5px;top:103px;width:1px;height:9.5px;background:#a9b9d0;"></div>
<span class="t" style="left:241.13px;top:103.25px;line-height:9px;font-size:7.2px;color:#3a3a3a;transform:scaleX(0.780);">E</span>
<div style="left:364.5px;top:103px;width:1px;height:9.5px;background:#a9b9d0;"></div>
<span class="t" style="left:324.78px;top:103.25px;line-height:9px;font-size:7.2px;color:#3a3a3a;transform:scaleX(0.780);">F</span>
<div style="left:455.5px;top:103px;width:1px;height:9.5px;background:#a9b9d0;"></div>
<span class="t" style="left:408.32px;top:103.25px;line-height:9px;font-size:7.2px;color:#3a3a3a;transform:scaleX(0.780);">G</span>
<div style="left:501.5px;top:103px;width:1px;height:9.5px;background:#a9b9d0;"></div>
<span class="t" style="left:476.97px;top:103.25px;line-height:9px;font-size:7.2px;color:#3a3a3a;transform:scaleX(0.780);">H</span>
<div style="left:502px;top:103px;width:47px;height:9.5px;background:linear-gradient(#fbe3b0,#f7cd83 50%,#f3ba5c);border-bottom:0.8px solid #e0983a;"></div>
<div style="left:548.5px;top:103px;width:1px;height:9.5px;background:#a9b9d0;"></div>
<span class="t" style="left:524.72px;top:103.25px;line-height:9px;font-size:7.2px;color:#3a3a3a;transform:scaleX(0.780);">I</span>
<div style="left:592.0px;top:103px;width:1px;height:9.5px;background:#a9b9d0;"></div>
<span class="t" style="left:570.55px;top:103.25px;line-height:9px;font-size:7.2px;color:#3a3a3a;transform:scaleX(0.780);">J</span>
<div style="left:0px;top:103px;width:12px;height:9.5px;background:linear-gradient(#bdd3ef,#a6c1e7);border-right:1px solid #9db5d8;border-bottom:0.8px solid #9fb0c8;"></div>
<svg style="left:6px;top:105.5px" width="5" height="6" viewBox="0 0 5 6"><path d="M5 0 L5 6 L0 6 Z" fill="#dde8f7"/></svg>
<div style="left:0px;top:112.5px;width:12px;height:463px;background:#e4ecf7;border-right:1px solid #b7c6dc;"></div>
<div style="left:0px;top:122.7px;width:12px;height:1px;background:#b3c1d6;"></div>
<span class="t" style="left:4.46px;top:114.25px;line-height:9px;font-size:7.5px;color:#333;transform:scaleX(0.740);">1</span>
<div style="left:0px;top:131.8px;width:12px;height:1px;background:#b3c1d6;"></div>
<span class="t" style="left:4.46px;top:123.25px;line-height:9px;font-size:7.5px;color:#333;transform:scaleX(0.740);">2</span>
<div style="left:0px;top:135.8px;width:12px;height:1px;background:#b3c1d6;"></div>
<div style="left:4.6px;top:132.5px;width:2.8px;height:1.3px;background:transparent;border:0.7px solid #555;border-top:0;border-radius:0 0 1.4px 1.4px;"></div>
<div style="left:0px;top:139.8px;width:12px;height:1px;background:#b3c1d6;"></div>
<div style="left:0px;top:144.0px;width:12px;height:1px;background:#b3c1d6;"></div>
<div style="left:4.6px;top:140.5px;width:2.8px;height:1.3px;background:transparent;border:0.7px solid #555;border-top:0;border-radius:0 0 1.4px 1.4px;"></div>
<div style="left:0px;top:168.7px;width:12px;height:1px;background:#b3c1d6;"></div>
<span class="t" style="left:4.46px;top:160.25px;line-height:9px;font-size:7.5px;color:#333;transform:scaleX(0.740);">6</span>
<div style="left:0px;top:183.7px;width:12px;height:1px;background:#b3c1d6;"></div>
<span class="t" style="left:4.46px;top:175.25px;line-height:9px;font-size:7.5px;color:#333;transform:scaleX(0.740);">7</span>
<div style="left:0px;top:198.2px;width:12px;height:1px;background:#b3c1d6;"></div>
<span class="t" style="left:4.46px;top:190.25px;line-height:9px;font-size:7.5px;color:#333;transform:scaleX(0.740);">8</span>
<div style="left:0px;top:210.8px;width:12px;height:1px;background:#b3c1d6;"></div>
<span class="t" style="left:4.46px;top:202.25px;line-height:9px;font-size:7.5px;color:#333;transform:scaleX(0.740);">9</span>
<div style="left:0px;top:235.3px;width:12px;height:1px;background:#b3c1d6;"></div>
<span class="t" style="left:2.91px;top:227.25px;line-height:9px;font-size:7.5px;color:#333;transform:scaleX(0.740);">10</span>
<div style="left:0px;top:235.8px;width:12px;height:25.5px;background:linear-gradient(90deg,#fbdda2,#f6c36a);border-right:1px solid #e0983a;"></div>
<div style="left:0px;top:260.8px;width:12px;height:1px;background:#b3c1d6;"></div>
<span class="t" style="left:3.12px;top:252.25px;line-height:9px;font-size:7.5px;color:#333;transform:scaleX(0.740);">11</span>
<div style="left:0px;top:285.75px;width:12px;height:1px;background:#b3c1d6;"></div>
<span class="t" style="left:2.91px;top:277.25px;line-height:9px;font-size:7.5px;color:#333;transform:scaleX(0.740);">12</span>
<div style="left:0px;top:310.7px;width:12px;height:1px;background:#b3c1d6;"></div>
<span class="t" style="left:2.91px;top:302.25px;line-height:9px;font-size:7.5px;color:#333;transform:scaleX(0.740);">13</span>
<div style="left:0px;top:335.65px;width:12px;height:1px;background:#b3c1d6;"></div>
<span class="t" style="left:2.91px;top:327.25px;line-height:9px;font-size:7.5px;color:#333;transform:scaleX(0.740);">14</span>
<div style="left:0px;top:360.6px;width:12px;height:1px;background:#b3c1d6;"></div>
<span class="t" style="left:2.91px;top:352.25px;line-height:9px;font-size:7.5px;color:#333;transform:scaleX(0.740);">15</span>
<div style="left:0px;top:385.54999999999995px;width:12px;height:1px;background:#b3c1d6;"></div>
<span class="t" style="left:2.91px;top:377.25px;line-height:9px;font-size:7.5px;color:#333;transform:scaleX(0.740);">16</span>
<div style="left:0px;top:410.5px;width:12px;height:1px;background:#b3c1d6;"></div>
<span class="t" style="left:2.91px;top:402.25px;line-height:9px;font-size:7.5px;color:#333;transform:scaleX(0.740);">17</span>
<div style="left:0px;top:435.45px;width:12px;height:1px;background:#b3c1d6;"></div>
<span class="t" style="left:2.91px;top:427.25px;line-height:9px;font-size:7.5px;color:#333;transform:scaleX(0.740);">18</span>
<div style="left:0px;top:460.4px;width:12px;height:1px;background:#b3c1d6;"></div>
<span class="t" style="left:2.91px;top:452.25px;line-height:9px;font-size:7.5px;color:#333;transform:scaleX(0.740);">19</span>
<div style="left:0px;top:485.35px;width:12px;height:1px;background:#b3c1d6;"></div>
<span class="t" style="left:2.91px;top:477.25px;line-height:9px;font-size:7.5px;color:#333;transform:scaleX(0.740);">20</span>
<div style="left:0px;top:510.29999999999995px;width:12px;height:1px;background:#b3c1d6;"></div>
<span class="t" style="left:2.91px;top:502.25px;line-height:9px;font-size:7.5px;color:#333;transform:scaleX(0.740);">21</span>
<div style="left:0px;top:535.25px;width:12px;height:1px;background:#b3c1d6;"></div>
<span class="t" style="left:2.91px;top:527.25px;line-height:9px;font-size:7.5px;color:#333;transform:scaleX(0.740);">22</span>
<div style="left:0px;top:560.1999999999999px;width:12px;height:1px;background:#b3c1d6;"></div>
<span class="t" style="left:2.91px;top:552.25px;line-height:9px;font-size:7.5px;color:#333;transform:scaleX(0.740);">23</span>
<div style="left:0px;top:585.15px;width:12px;height:1px;background:#b3c1d6;"></div>
<div style="left:12px;top:112.5px;width:580.5px;height:19.5px;background:#538ed5;"></div>
<div style="left:12px;top:132px;width:580.5px;height:4.3px;background:#ffc000;"></div>
<div style="left:12px;top:140px;width:580.5px;height:4.5px;background:#ffc000;"></div>
<span class="t" style="left:242.55px;top:116.25px;line-height:14px;font-size:12.5px;color:#fff;transform:scaleX(0.679);font-weight:bold;">2. RECEBIMENTOS</span>
<div style="left:12px;top:144.5px;width:82.2px;height:431.3px;background:#538ed5;"></div>
<div style="left:12px;top:225px;width:82.2px;height:15px;background:#fff;"></div>
<div style="left:18.7px;top:159.8px;width:69.3px;height:1.2px;background:#6f89ab;"></div>
<span class="t" style="left:19.60px;top:168.25px;line-height:14px;font-size:10.5px;color:#3a5f98;transform:scaleX(0.711);font-weight:bold;">Menu</span>
<span class="t" style="left:19.20px;top:167.25px;line-height:14px;font-size:10.5px;color:#fff;transform:scaleX(0.711);font-weight:bold;">Menu</span>
<span class="t" style="left:16.70px;top:192.25px;line-height:9px;font-size:7.7px;color:#fff;transform:scaleX(0.723);-webkit-text-stroke:0.12px #fff;">Início</span>
<span class="t" style="left:16.70px;top:211.25px;line-height:9px;font-size:7.7px;color:#fff;transform:scaleX(0.695);-webkit-text-stroke:0.12px #fff;">1. Plano de Contas</span>
<span class="t" style="left:16.70px;top:228.25px;line-height:9px;font-size:7.7px;color:#111;transform:scaleX(0.720);-webkit-text-stroke:0.12px #111;">2. Recebimentos</span>
<span class="t" style="left:16.70px;top:247.25px;line-height:9px;font-size:7.7px;color:#fff;transform:scaleX(0.704);-webkit-text-stroke:0.12px #fff;">3. Resultados Consolidados</span>
<span class="t" style="left:16.70px;top:265.25px;line-height:9px;font-size:7.7px;color:#fff;transform:scaleX(0.706);-webkit-text-stroke:0.12px #fff;">4. Gráficos</span>
<span class="t" style="left:16.70px;top:284.25px;line-height:9px;font-size:7.7px;color:#fff;transform:scaleX(0.719);-webkit-text-stroke:0.12px #fff;">5. Relatório para Impressão</span>
<div style="left:18.7px;top:301.5px;width:69.3px;height:1.2px;background:#6f89ab;"></div>
<span class="t" style="left:16.70px;top:313.25px;line-height:9px;font-size:7.7px;color:#fff;transform:scaleX(0.720);-webkit-text-stroke:0.12px #fff;">Dúvidas Frequentes</span>
<div style="left:105.5px;top:180px;width:38.5px;height:16px;background:#ff9100;"></div>
<span class="t" style="left:116.00px;top:184.25px;line-height:9px;font-size:7.7px;color:#fff;transform:scaleX(0.693);-webkit-text-stroke:0.15px #fff;">Janeiro</span>
<div style="left:145.53px;top:180px;width:38.5px;height:16px;background:#6194ce;"></div>
<span class="t" style="left:153.53px;top:184.25px;line-height:9px;font-size:7.7px;color:#fff;transform:scaleX(0.692);-webkit-text-stroke:0.15px #fff;">Fevereiro</span>
<div style="left:185.56px;top:180px;width:38.5px;height:16px;background:#6194ce;"></div>
<span class="t" style="left:197.31px;top:184.25px;line-height:9px;font-size:7.7px;color:#fff;transform:scaleX(0.701);-webkit-text-stroke:0.15px #fff;">Março</span>
<div style="left:225.59px;top:180px;width:38.5px;height:16px;background:#6194ce;"></div>
<span class="t" style="left:238.84px;top:184.25px;line-height:9px;font-size:7.7px;color:#fff;transform:scaleX(0.779);-webkit-text-stroke:0.15px #fff;">Abril</span>
<div style="left:265.62px;top:180px;width:38.5px;height:16px;background:#6194ce;"></div>
<span class="t" style="left:279.12px;top:184.25px;line-height:9px;font-size:7.7px;color:#fff;transform:scaleX(0.689);-webkit-text-stroke:0.15px #fff;">Maio</span>
<div style="left:305.65px;top:180px;width:38.5px;height:16px;background:#6194ce;"></div>
<span class="t" style="left:317.40px;top:184.25px;line-height:9px;font-size:7.7px;color:#fff;transform:scaleX(0.715);-webkit-text-stroke:0.15px #fff;">Junho</span>
<div style="left:345.68px;top:180px;width:38.5px;height:16px;background:#6194ce;"></div>
<span class="t" style="left:358.43px;top:184.25px;line-height:9px;font-size:7.7px;color:#fff;transform:scaleX(0.706);-webkit-text-stroke:0.15px #fff;">Julho</span>
<div style="left:385.71000000000004px;top:180px;width:38.5px;height:16px;background:#6194ce;"></div>
<span class="t" style="left:396.21px;top:184.25px;line-height:9px;font-size:7.7px;color:#fff;transform:scaleX(0.730);-webkit-text-stroke:0.15px #fff;">Agosto</span>
<div style="left:425.74px;top:180px;width:38.5px;height:16px;background:#6194ce;"></div>
<span class="t" style="left:433.49px;top:184.25px;line-height:9px;font-size:7.7px;color:#fff;transform:scaleX(0.689);-webkit-text-stroke:0.15px #fff;">Setembro</span>
<div style="left:465.77px;top:180px;width:38.5px;height:16px;background:#6194ce;"></div>
<span class="t" style="left:475.02px;top:184.25px;line-height:9px;font-size:7.7px;color:#fff;transform:scaleX(0.719);-webkit-text-stroke:0.15px #fff;">Outubro</span>
<div style="left:505.8px;top:180px;width:38.5px;height:16px;background:#6194ce;"></div>
<span class="t" style="left:512.55px;top:184.25px;line-height:9px;font-size:7.7px;color:#fff;transform:scaleX(0.704);-webkit-text-stroke:0.15px #fff;">Novembro</span>
<div style="left:545.83px;top:180px;width:38.5px;height:16px;background:#6194ce;"></div>
<span class="t" style="left:553.33px;top:184.25px;line-height:9px;font-size:7.7px;color:#fff;transform:scaleX(0.662);-webkit-text-stroke:0.15px #fff;">Dezembro</span>
<div style="left:105.5px;top:199.5px;width:487px;height:10.5px;background:#ffc000;"></div>
<div style="left:106px;top:212px;width:45px;height:23.6px;background:#32639b;"></div>
<div style="left:153px;top:212px;width:44px;height:23.6px;background:#32639b;"></div>
<div style="left:199px;top:212px;width:88px;height:23.6px;background:#32639b;"></div>
<div style="left:289.5px;top:212px;width:74.5px;height:23.6px;background:#32639b;"></div>
<div style="left:366.5px;top:212px;width:88.5px;height:23.6px;background:#32639b;"></div>
<div style="left:457.5px;top:212px;width:43.5px;height:23.6px;background:#32639b;"></div>
<div style="left:503px;top:212px;width:44.5px;height:23.6px;background:#32639b;"></div>
<div style="left:550px;top:212px;width:42.5px;height:23.6px;background:#32639b;"></div>
<span class="t" style="left:113.00px;top:214.25px;line-height:9px;font-size:8.2px;color:#fff;transform:scaleX(0.695);font-weight:bold;">Previsão de</span>
<span class="t" style="left:110.80px;top:226.25px;line-height:9px;font-size:8.2px;color:#fff;transform:scaleX(0.718);font-weight:bold;">recebimento</span>
<span class="t" style="left:166.65px;top:214.25px;line-height:9px;font-size:8.2px;color:#fff;transform:scaleX(0.698);font-weight:bold;">Dia do</span>
<span class="t" style="left:157.10px;top:226.25px;line-height:9px;font-size:8.2px;color:#fff;transform:scaleX(0.718);font-weight:bold;">recebimento</span>
<span class="t" style="left:203.30px;top:220.25px;line-height:9px;font-size:8.2px;color:#fff;transform:scaleX(0.690);font-weight:bold;">Plano de contas</span>
<span class="t" style="left:294.00px;top:220.25px;line-height:9px;font-size:8.2px;color:#fff;transform:scaleX(0.719);font-weight:bold;">Conta</span>
<span class="t" style="left:370.00px;top:220.25px;line-height:9px;font-size:8.2px;color:#fff;transform:scaleX(0.681);font-weight:bold;">Descrição</span>
<span class="t" style="left:460.50px;top:220.25px;line-height:9px;font-size:8.2px;color:#fff;transform:scaleX(0.712);font-weight:bold;">Valor original</span>
<span class="t" style="left:504.45px;top:214.25px;line-height:9px;font-size:8.2px;color:#fff;transform:scaleX(0.690);font-weight:bold;">R$ adicional de</span>
<span class="t" style="left:518.00px;top:226.25px;line-height:9px;font-size:8.2px;color:#fff;transform:scaleX(0.748);font-weight:bold;">juros</span>
<span class="t" style="left:551.70px;top:220.25px;line-height:9px;font-size:8.2px;color:#fff;transform:scaleX(0.745);font-weight:bold;">Total a receber</span>
<div style="left:144.2px;top:227.2px;width:6.6px;height:7px;background:linear-gradient(#fbfcfd,#e3e6ec 50%,#cfd4dd);border:0.7px solid #aab1be;border-radius:.5px;"></div>
<svg style="left:145.80px;top:229.80px" width="3.4" height="2.3" viewBox="0 0 3.4 2.3"><path d="M0 0 L3.4 0 L1.7 2.3 Z" fill="#2a2f3a"/></svg>
<div style="left:190.5px;top:227.2px;width:6.6px;height:7px;background:linear-gradient(#fbfcfd,#e3e6ec 50%,#cfd4dd);border:0.7px solid #aab1be;border-radius:.5px;"></div>
<svg style="left:192.10px;top:229.80px" width="3.4" height="2.3" viewBox="0 0 3.4 2.3"><path d="M0 0 L3.4 0 L1.7 2.3 Z" fill="#2a2f3a"/></svg>
<div style="left:280.3px;top:227.2px;width:6.6px;height:7px;background:linear-gradient(#fbfcfd,#e3e6ec 50%,#cfd4dd);border:0.7px solid #aab1be;border-radius:.5px;"></div>
<svg style="left:281.90px;top:229.80px" width="3.4" height="2.3" viewBox="0 0 3.4 2.3"><path d="M0 0 L3.4 0 L1.7 2.3 Z" fill="#2a2f3a"/></svg>
<div style="left:357.1px;top:227.2px;width:6.6px;height:7px;background:linear-gradient(#fbfcfd,#e3e6ec 50%,#cfd4dd);border:0.7px solid #aab1be;border-radius:.5px;"></div>
<svg style="left:358.70px;top:229.80px" width="3.4" height="2.3" viewBox="0 0 3.4 2.3"><path d="M0 0 L3.4 0 L1.7 2.3 Z" fill="#2a2f3a"/></svg>
<div style="left:448.6px;top:227.2px;width:6.6px;height:7px;background:linear-gradient(#fbfcfd,#e3e6ec 50%,#cfd4dd);border:0.7px solid #aab1be;border-radius:.5px;"></div>
<svg style="left:450.20px;top:229.80px" width="3.4" height="2.3" viewBox="0 0 3.4 2.3"><path d="M0 0 L3.4 0 L1.7 2.3 Z" fill="#2a2f3a"/></svg>
<div style="left:495.2px;top:227.2px;width:6.6px;height:7px;background:linear-gradient(#fbfcfd,#e3e6ec 50%,#cfd4dd);border:0.7px solid #aab1be;border-radius:.5px;"></div>
<svg style="left:496.80px;top:229.80px" width="3.4" height="2.3" viewBox="0 0 3.4 2.3"><path d="M0 0 L3.4 0 L1.7 2.3 Z" fill="#2a2f3a"/></svg>
<div style="left:541.3px;top:227.2px;width:6.6px;height:7px;background:linear-gradient(#fbfcfd,#e3e6ec 50%,#cfd4dd);border:0.7px solid #aab1be;border-radius:.5px;"></div>
<svg style="left:542.90px;top:229.80px" width="3.4" height="2.3" viewBox="0 0 3.4 2.3"><path d="M0 0 L3.4 0 L1.7 2.3 Z" fill="#2a2f3a"/></svg>
<div style="left:588.5px;top:227.2px;width:6.6px;height:7px;background:linear-gradient(#fbfcfd,#e3e6ec 50%,#cfd4dd);border:0.7px solid #aab1be;border-radius:.5px;"></div>
<svg style="left:590.10px;top:229.80px" width="3.4" height="2.3" viewBox="0 0 3.4 2.3"><path d="M0 0 L3.4 0 L1.7 2.3 Z" fill="#2a2f3a"/></svg>
<div style="left:106px;top:361.1px;width:486.5px;height:214.89999999999998px;background:#e9e9e9;"></div>
<div style="left:549px;top:236px;width:43.5px;height:125.10000000000002px;background:#e9e9e9;"></div>
<div style="left:105px;top:260.8px;width:444px;height:1px;background:#e1e1e1;"></div>
<div style="left:549px;top:260.3px;width:43.5px;height:2px;background:#fff;"></div>
<div style="left:105px;top:285.75px;width:444px;height:1px;background:#e1e1e1;"></div>
<div style="left:549px;top:285.25px;width:43.5px;height:2px;background:#fff;"></div>
<div style="left:105px;top:310.7px;width:444px;height:1px;background:#e1e1e1;"></div>
<div style="left:549px;top:310.2px;width:43.5px;height:2px;background:#fff;"></div>
<div style="left:105px;top:335.65px;width:444px;height:1px;background:#e1e1e1;"></div>
<div style="left:549px;top:335.15px;width:43.5px;height:2px;background:#fff;"></div>
<div style="left:105px;top:360.1px;width:487.5px;height:2px;background:#fff;"></div>
<div style="left:105px;top:385.04999999999995px;width:487.5px;height:2px;background:#fff;"></div>
<div style="left:105px;top:410.0px;width:487.5px;height:2px;background:#fff;"></div>
<div style="left:105px;top:434.95px;width:487.5px;height:2px;background:#fff;"></div>
<div style="left:105px;top:459.9px;width:487.5px;height:2px;background:#fff;"></div>
<div style="left:105px;top:484.85px;width:487.5px;height:2px;background:#fff;"></div>
<div style="left:105px;top:509.79999999999995px;width:487.5px;height:2px;background:#fff;"></div>
<div style="left:105px;top:534.75px;width:487.5px;height:2px;background:#fff;"></div>
<div style="left:105px;top:559.6999999999999px;width:487.5px;height:2px;background:#fff;"></div>
<div style="left:151.5px;top:236px;width:1px;height:125.10000000000002px;background:#e1e1e1;"></div>
<div style="left:151px;top:361.1px;width:2px;height:214.89999999999998px;background:#fff;"></div>
<div style="left:197.5px;top:236px;width:1px;height:125.10000000000002px;background:#e1e1e1;"></div>
<div style="left:197px;top:361.1px;width:2px;height:214.89999999999998px;background:#fff;"></div>
<div style="left:287.5px;top:236px;width:1px;height:125.10000000000002px;background:#e1e1e1;"></div>
<div style="left:287px;top:361.1px;width:2px;height:214.89999999999998px;background:#fff;"></div>
<div style="left:364.5px;top:236px;width:1px;height:125.10000000000002px;background:#e1e1e1;"></div>
<div style="left:364px;top:361.1px;width:2px;height:214.89999999999998px;background:#fff;"></div>
<div style="left:455.5px;top:236px;width:1px;height:125.10000000000002px;background:#e1e1e1;"></div>
<div style="left:455px;top:361.1px;width:2px;height:214.89999999999998px;background:#fff;"></div>
<div style="left:501.5px;top:236px;width:1px;height:125.10000000000002px;background:#e1e1e1;"></div>
<div style="left:501px;top:361.1px;width:2px;height:214.89999999999998px;background:#fff;"></div>
<div style="left:548.5px;top:236px;width:1px;height:125.10000000000002px;background:#e1e1e1;"></div>
<div style="left:548px;top:361.1px;width:2px;height:214.89999999999998px;background:#fff;"></div>
<div style="left:548.3px;top:236px;width:2px;height:340px;background:#fff;"></div>
<div style="left:105px;top:236px;width:1px;height:125.10000000000002px;background:#e1e1e1;"></div>
<span class="t" style="left:125.50px;top:245.25px;line-height:9px;font-size:8px;color:#383838;transform:scaleX(0.674);-webkit-text-stroke:0.22px #383838;">10</span>
<span class="t" style="left:160.00px;top:245.25px;line-height:9px;font-size:8px;color:#383838;transform:scaleX(0.749);-webkit-text-stroke:0.22px #383838;">10/01/2015</span>
<span class="t" style="left:203.00px;top:245.25px;line-height:9px;font-size:8px;color:#383838;transform:scaleX(0.733);-webkit-text-stroke:0.22px #383838;">Receitas com produtos</span>
<span class="t" style="left:294.00px;top:245.25px;line-height:9px;font-size:8px;color:#383838;transform:scaleX(0.743);-webkit-text-stroke:0.22px #383838;">Computadores</span>
<span class="t" style="left:370.50px;top:245.25px;line-height:9px;font-size:8px;color:#383838;transform:scaleX(0.727);-webkit-text-stroke:0.22px #383838;">Venda do Dell DL2345 5Gb i7</span>
<span class="t" style="left:463.00px;top:245.25px;line-height:9px;font-size:8px;color:#383838;transform:scaleX(0.734);-webkit-text-stroke:0.22px #383838;">R$ 3.244,50</span>
<span class="t" style="left:515.50px;top:245.25px;line-height:9px;font-size:8px;color:#383838;transform:scaleX(0.714);-webkit-text-stroke:0.22px #383838;">R$ 0,00</span>
<span class="t" style="left:556.00px;top:245.25px;line-height:9px;font-size:8px;color:#383838;transform:scaleX(0.734);-webkit-text-stroke:0.22px #383838;">R$ 3.244,50</span>
<span class="t" style="left:125.50px;top:270.25px;line-height:9px;font-size:8px;color:#383838;transform:scaleX(0.674);-webkit-text-stroke:0.22px #383838;">10</span>
<span class="t" style="left:160.00px;top:270.25px;line-height:9px;font-size:8px;color:#383838;transform:scaleX(0.749);-webkit-text-stroke:0.22px #383838;">10/02/2015</span>
<span class="t" style="left:203.00px;top:270.25px;line-height:9px;font-size:8px;color:#383838;transform:scaleX(0.733);-webkit-text-stroke:0.22px #383838;">Receitas com produtos</span>
<span class="t" style="left:294.00px;top:270.25px;line-height:9px;font-size:8px;color:#383838;transform:scaleX(0.743);-webkit-text-stroke:0.22px #383838;">Computadores</span>
<span class="t" style="left:370.50px;top:270.25px;line-height:9px;font-size:8px;color:#383838;transform:scaleX(0.727);-webkit-text-stroke:0.22px #383838;">Venda do Dell DL2345 5Gb i7</span>
<span class="t" style="left:463.00px;top:270.25px;line-height:9px;font-size:8px;color:#383838;transform:scaleX(0.734);-webkit-text-stroke:0.22px #383838;">R$ 8.000,00</span>
<span class="t" style="left:515.50px;top:270.25px;line-height:9px;font-size:8px;color:#383838;transform:scaleX(0.714);-webkit-text-stroke:0.22px #383838;">R$ 0,00</span>
<span class="t" style="left:556.00px;top:270.25px;line-height:9px;font-size:8px;color:#383838;transform:scaleX(0.734);-webkit-text-stroke:0.22px #383838;">R$ 8.000,00</span>
<span class="t" style="left:125.50px;top:295.25px;line-height:9px;font-size:8px;color:#383838;transform:scaleX(0.674);-webkit-text-stroke:0.22px #383838;">10</span>
<span class="t" style="left:160.00px;top:295.25px;line-height:9px;font-size:8px;color:#383838;transform:scaleX(0.749);-webkit-text-stroke:0.22px #383838;">15/01/2015</span>
<span class="t" style="left:203.00px;top:295.25px;line-height:9px;font-size:8px;color:#383838;transform:scaleX(0.721);-webkit-text-stroke:0.22px #383838;">Receitas não operacionais</span>
<span class="t" style="left:294.00px;top:295.25px;line-height:9px;font-size:8px;color:#383838;transform:scaleX(0.770);-webkit-text-stroke:0.22px #383838;">Investimentos</span>
<span class="t" style="left:370.50px;top:295.25px;line-height:9px;font-size:8px;color:#383838;transform:scaleX(0.727);-webkit-text-stroke:0.22px #383838;">Venda do Dell DL2345 5Gb i7</span>
<span class="t" style="left:463.00px;top:295.25px;line-height:9px;font-size:8px;color:#383838;transform:scaleX(0.734);-webkit-text-stroke:0.22px #383838;">R$ 8.000,00</span>
<span class="t" style="left:515.50px;top:295.25px;line-height:9px;font-size:8px;color:#383838;transform:scaleX(0.714);-webkit-text-stroke:0.22px #383838;">R$ 0,00</span>
<span class="t" style="left:556.00px;top:295.25px;line-height:9px;font-size:8px;color:#383838;transform:scaleX(0.734);-webkit-text-stroke:0.22px #383838;">R$ 8.000,00</span>
<span class="t" style="left:125.50px;top:320.25px;line-height:9px;font-size:8px;color:#383838;transform:scaleX(0.674);-webkit-text-stroke:0.22px #383838;">10</span>
<span class="t" style="left:203.00px;top:320.25px;line-height:9px;font-size:8px;color:#383838;transform:scaleX(0.733);-webkit-text-stroke:0.22px #383838;">Receitas com produtos</span>
<span class="t" style="left:294.00px;top:320.25px;line-height:9px;font-size:8px;color:#383838;transform:scaleX(0.743);-webkit-text-stroke:0.22px #383838;">Computadores</span>
<span class="t" style="left:370.50px;top:320.25px;line-height:9px;font-size:8px;color:#383838;transform:scaleX(0.727);-webkit-text-stroke:0.22px #383838;">Venda do Dell DL2345 5Gb i7</span>
<span class="t" style="left:463.00px;top:320.25px;line-height:9px;font-size:8px;color:#383838;transform:scaleX(0.734);-webkit-text-stroke:0.22px #383838;">R$ 8.000,00</span>
<span class="t" style="left:515.50px;top:320.25px;line-height:9px;font-size:8px;color:#383838;transform:scaleX(0.714);-webkit-text-stroke:0.22px #383838;">R$ 0,00</span>
<span class="t" style="left:556.00px;top:320.25px;line-height:9px;font-size:8px;color:#383838;transform:scaleX(0.734);-webkit-text-stroke:0.22px #383838;">R$ 8.000,00</span>
<span class="t" style="left:125.50px;top:345.25px;line-height:9px;font-size:8px;color:#383838;transform:scaleX(0.674);-webkit-text-stroke:0.22px #383838;">10</span>
<span class="t" style="left:203.00px;top:345.25px;line-height:9px;font-size:8px;color:#383838;transform:scaleX(0.733);-webkit-text-stroke:0.22px #383838;">Receitas com produtos</span>
<span class="t" style="left:294.00px;top:345.25px;line-height:9px;font-size:8px;color:#383838;transform:scaleX(0.743);-webkit-text-stroke:0.22px #383838;">Computadores</span>
<span class="t" style="left:370.50px;top:345.25px;line-height:9px;font-size:8px;color:#383838;transform:scaleX(0.727);-webkit-text-stroke:0.22px #383838;">Venda do Dell DL2345 5Gb i7</span>
<span class="t" style="left:463.00px;top:345.25px;line-height:9px;font-size:8px;color:#383838;transform:scaleX(0.734);-webkit-text-stroke:0.22px #383838;">R$ 8.000,00</span>
<span class="t" style="left:515.50px;top:345.25px;line-height:9px;font-size:8px;color:#383838;transform:scaleX(0.714);-webkit-text-stroke:0.22px #383838;">R$ 0,00</span>
<span class="t" style="left:556.00px;top:345.25px;line-height:9px;font-size:8px;color:#383838;transform:scaleX(0.734);-webkit-text-stroke:0.22px #383838;">R$ 8.000,00</span>
<span class="t" style="left:125.50px;top:370.25px;line-height:9px;font-size:8px;color:#383838;transform:scaleX(0.674);-webkit-text-stroke:0.22px #383838;">10</span>
<span class="t" style="left:203.00px;top:370.25px;line-height:9px;font-size:8px;color:#383838;transform:scaleX(0.733);-webkit-text-stroke:0.22px #383838;">Receitas com produtos</span>
<span class="t" style="left:294.00px;top:370.25px;line-height:9px;font-size:8px;color:#383838;transform:scaleX(0.743);-webkit-text-stroke:0.22px #383838;">Computadores</span>
<span class="t" style="left:370.50px;top:370.25px;line-height:9px;font-size:8px;color:#383838;transform:scaleX(0.727);-webkit-text-stroke:0.22px #383838;">Venda do Dell DL2345 5Gb i7</span>
<span class="t" style="left:463.00px;top:370.25px;line-height:9px;font-size:8px;color:#383838;transform:scaleX(0.734);-webkit-text-stroke:0.22px #383838;">R$ 8.000,00</span>
<span class="t" style="left:515.50px;top:370.25px;line-height:9px;font-size:8px;color:#383838;transform:scaleX(0.714);-webkit-text-stroke:0.22px #383838;">R$ 0,00</span>
<span class="t" style="left:556.00px;top:370.25px;line-height:9px;font-size:8px;color:#383838;transform:scaleX(0.734);-webkit-text-stroke:0.22px #383838;">R$ 8.000,00</span>
<span class="t" style="left:125.50px;top:395.25px;line-height:9px;font-size:8px;color:#383838;transform:scaleX(0.723);-webkit-text-stroke:0.22px #383838;">11</span>
<span class="t" style="left:203.00px;top:395.25px;line-height:9px;font-size:8px;color:#383838;transform:scaleX(0.733);-webkit-text-stroke:0.22px #383838;">Receitas com produtos</span>
<span class="t" style="left:294.00px;top:395.25px;line-height:9px;font-size:8px;color:#383838;transform:scaleX(0.743);-webkit-text-stroke:0.22px #383838;">Computadores</span>
<span class="t" style="left:370.50px;top:395.25px;line-height:9px;font-size:8px;color:#383838;transform:scaleX(0.727);-webkit-text-stroke:0.22px #383838;">Venda do Dell DL2345 4Gb i5</span>
<span class="t" style="left:461.25px;top:395.25px;line-height:9px;font-size:8px;color:#383838;transform:scaleX(0.739);-webkit-text-stroke:0.22px #383838;">R$ 12.000,00</span>
<span class="t" style="left:515.50px;top:395.25px;line-height:9px;font-size:8px;color:#383838;transform:scaleX(0.714);-webkit-text-stroke:0.22px #383838;">R$ 0,00</span>
<span class="t" style="left:554.25px;top:395.25px;line-height:9px;font-size:8px;color:#383838;transform:scaleX(0.739);-webkit-text-stroke:0.22px #383838;">R$ 12.000,00</span>
<span class="t" style="left:125.50px;top:420.25px;line-height:9px;font-size:8px;color:#383838;transform:scaleX(0.723);-webkit-text-stroke:0.22px #383838;">11</span>
<span class="t" style="left:203.00px;top:420.25px;line-height:9px;font-size:8px;color:#383838;transform:scaleX(0.733);-webkit-text-stroke:0.22px #383838;">Receitas com produtos</span>
<span class="t" style="left:294.00px;top:420.25px;line-height:9px;font-size:8px;color:#383838;transform:scaleX(0.743);-webkit-text-stroke:0.22px #383838;">Computadores</span>
<span class="t" style="left:370.50px;top:420.25px;line-height:9px;font-size:8px;color:#383838;transform:scaleX(0.727);-webkit-text-stroke:0.22px #383838;">Venda do Dell DL2345 4Gb i5</span>
<span class="t" style="left:461.25px;top:420.25px;line-height:9px;font-size:8px;color:#383838;transform:scaleX(0.739);-webkit-text-stroke:0.22px #383838;">R$ 12.000,00</span>
<span class="t" style="left:515.50px;top:420.25px;line-height:9px;font-size:8px;color:#383838;transform:scaleX(0.714);-webkit-text-stroke:0.22px #383838;">R$ 0,00</span>
<span class="t" style="left:554.25px;top:420.25px;line-height:9px;font-size:8px;color:#383838;transform:scaleX(0.739);-webkit-text-stroke:0.22px #383838;">R$ 12.000,00</span>
<span class="t" style="left:125.50px;top:444.25px;line-height:9px;font-size:8px;color:#383838;transform:scaleX(0.723);-webkit-text-stroke:0.22px #383838;">11</span>
<span class="t" style="left:203.00px;top:444.25px;line-height:9px;font-size:8px;color:#383838;transform:scaleX(0.733);-webkit-text-stroke:0.22px #383838;">Receitas com produtos</span>
<span class="t" style="left:294.00px;top:444.25px;line-height:9px;font-size:8px;color:#383838;transform:scaleX(0.743);-webkit-text-stroke:0.22px #383838;">Computadores</span>
<span class="t" style="left:370.50px;top:444.25px;line-height:9px;font-size:8px;color:#383838;transform:scaleX(0.727);-webkit-text-stroke:0.22px #383838;">Venda do Dell DL2345 4Gb i5</span>
<span class="t" style="left:461.25px;top:444.25px;line-height:9px;font-size:8px;color:#383838;transform:scaleX(0.739);-webkit-text-stroke:0.22px #383838;">R$ 12.000,00</span>
<span class="t" style="left:515.50px;top:444.25px;line-height:9px;font-size:8px;color:#383838;transform:scaleX(0.714);-webkit-text-stroke:0.22px #383838;">R$ 0,00</span>
<span class="t" style="left:554.25px;top:444.25px;line-height:9px;font-size:8px;color:#383838;transform:scaleX(0.739);-webkit-text-stroke:0.22px #383838;">R$ 12.000,00</span>
<div style="left:501.3px;top:235.6px;width:48.4px;height:26.8px;background:transparent;border:2px solid #000;"></div>
<div style="left:547.5px;top:260.5px;width:3px;height:3px;background:#000;border:0.5px solid #fff;"></div>
<div style="left:592.8px;top:102.5px;width:7.2px;height:473.5px;background:linear-gradient(90deg,#6b90c7,#7c9ed1 55%,#8caad8);"></div>
<div style="left:592.5px;top:102.5px;width:7.5px;height:15.5px;background:linear-gradient(90deg,#9ab8e2,#b4cbea 50%,#a3bfe5);"></div>
<div style="left:593.5px;top:103.4px;width:5.6px;height:3.6px;background:#fff;border:0.8px solid #7d97c0;"></div>
<svg style="left:594px;top:110.5px" width="5" height="4" viewBox="0 0 5 4"><path d="M0 4 L2.5 0 L5 4 Z" fill="#5a6b88"/></svg>
<div style="left:593px;top:118px;width:6.5px;height:5px;background:#e8eef8;border:1px solid #9db2d4;border-radius:1px;"></div>
<svg style="left:594px;top:567.5px" width="5" height="4" viewBox="0 0 5 4"><path d="M0 0 L2.5 4 L5 0 Z" fill="#2b3d63"/></svg>
<div style="left:598.2px;top:118px;width:1.8px;height:458px;background:linear-gradient(90deg,#a3bbe0,#bdcfea);"></div>
<div style="left:0px;top:576px;width:600px;height:9.5px;background:linear-gradient(#7d9fd2,#9bb6e0);"></div>
<div style="left:12px;top:577px;width:568.5px;height:8px;background:linear-gradient(#ffffff,#e9edf3 45%,#cfd6e0);border-radius:1px;"></div>
<div style="left:293.5px;top:579px;width:0.8px;height:4px;background:#93a2bc;"></div>
<div style="left:295.3px;top:579px;width:0.8px;height:4px;background:#93a2bc;"></div>
<div style="left:297.1px;top:579px;width:0.8px;height:4px;background:#93a2bc;"></div>
<div style="left:0px;top:577px;width:3px;height:7px;background:#e8eef8;border:1px solid #7088b0;"></div>
<svg style="left:6px;top:578px" width="3" height="6" viewBox="0 0 3 6"><path d="M3 0 L0 3 L3 6 Z" fill="#2b3d63"/></svg>
<svg style="left:583.5px;top:578px" width="3" height="6" viewBox="0 0 3 6"><path d="M0 0 L3 3 L0 6 Z" fill="#2b3d63"/></svg>
<div style="left:589.5px;top:577.5px;width:2.5px;height:6.5px;background:#fff;border:1px solid #7088b0;"></div>
<div style="left:592.5px;top:576px;width:7.5px;height:9.5px;background:#86a8da;"></div>
<div style="left:0px;top:585.5px;width:600px;height:11.5px;background:linear-gradient(#d6e5f8,#bdd5f2 45%,#a9c8ee 55%,#b6d0f1);"></div>
<div style="left:0px;top:585px;width:600px;height:1px;background:#8aa9d6;"></div>
<span class="t" style="left:4.00px;top:588.25px;line-height:9px;font-size:7.5px;color:#1a3566;transform:scaleX(0.724);-webkit-text-stroke:0.2px #1a3566;">Pronto</span>
<div style="left:23px;top:587px;width:1px;height:10px;background:#e6effb;"></div>
<div style="left:0px;top:596.8px;width:600px;height:3.2px;background:linear-gradient(#7fb4e8,#4f9be0);"></div>
<div style="left:57.5px;top:597.5px;width:27px;height:2.5px;background:#cfe1f5;border:0.7px solid #2f4f78;border-bottom:0;border-radius:1px 1px 0 0;"></div>
<div style="left:86.3px;top:597.5px;width:27px;height:2.5px;background:#cfe1f5;border:0.7px solid #2f4f78;border-bottom:0;border-radius:1px 1px 0 0;"></div>
<div style="left:144.5px;top:597.5px;width:27px;height:2.5px;background:#cfe1f5;border:0.7px solid #2f4f78;border-bottom:0;border-radius:1px 1px 0 0;"></div>
<div style="left:490.4px;top:586.6px;width:26.6px;height:10.4px;background:linear-gradient(#eef4fc,#d3e1f4);border:0.7px solid #a5bcdc;border-radius:1px;"></div>
<div style="left:491px;top:587.2px;width:8.4px;height:9.2px;background:linear-gradient(#fde9a8,#f9cf63 50%,#f5bd45);border:0.7px solid #d9a03a;"></div>
<div style="left:492.8px;top:589.2px;width:4.8px;height:5.4px;background:#efe3bd;border:0.7px solid #8c7a4a;"></div>
<div style="left:494.3px;top:589.2px;width:0.6px;height:5.4px;background:#8c7a4a;"></div>
<div style="left:495.9px;top:589.2px;width:0.6px;height:5.4px;background:#8c7a4a;"></div>
<div style="left:492.8px;top:591.6px;width:4.8px;height:0.6px;background:#8c7a4a;"></div>
<div style="left:501.6px;top:589px;width:4.4px;height:5.8px;background:#9a9a9a;border:0.7px solid #777;"></div>
<div style="left:502.8px;top:590.2px;width:2px;height:3.4px;background:#d9d9d9;"></div>
<div style="left:510px;top:588.8px;width:5.2px;height:6px;background:#a3a3a3;border:0.7px solid #777;"></div>
<div style="left:512.3px;top:588.8px;width:0.7px;height:6px;background:#e8e8e8;"></div>
<div style="left:510px;top:591.4px;width:5.2px;height:0.7px;background:#e8e8e8;"></div>
<span class="t" style="left:520.90px;top:588.25px;line-height:9px;font-size:7.8px;color:#1b3a86;transform:scaleX(0.653);font-weight:bold;">90%</span>
<div style="left:535.0px;top:587.1999999999999px;width:7.4px;height:9.2px;background:radial-gradient(ellipse at 50% 40%,#ffffff,#d4e0f2);border:0.8px solid #5f789f;border-radius:50%;"></div>
<div style="left:536.9000000000001px;top:591.3px;width:3.6px;height:1px;background:#2d3e5c;"></div>
<div style="left:590.5999999999999px;top:587.1999999999999px;width:7.4px;height:9.2px;background:radial-gradient(ellipse at 50% 40%,#ffffff,#d4e0f2);border:0.8px solid #5f789f;border-radius:50%;"></div>
<div style="left:592.5px;top:591.3px;width:3.6px;height:1px;background:#2d3e5c;"></div>
<div style="left:593.8px;top:589.5999999999999px;width:1px;height:4.4px;background:#2d3e5c;"></div>
<div style="left:542.5px;top:591.4px;width:48px;height:0.8px;background:#7d9ccc;"></div>
<div style="left:542.5px;top:592.2px;width:48px;height:0.8px;background:#dde8f8;"></div>
<div style="left:561.6px;top:587.6px;width:4.4px;height:8.6px;background:linear-gradient(90deg,#f6f8fc,#c3d0e6);border:0.8px solid #5f789f;border-radius:1px 1px 2.2px 2.2px;"></div>
</div></body></html>
